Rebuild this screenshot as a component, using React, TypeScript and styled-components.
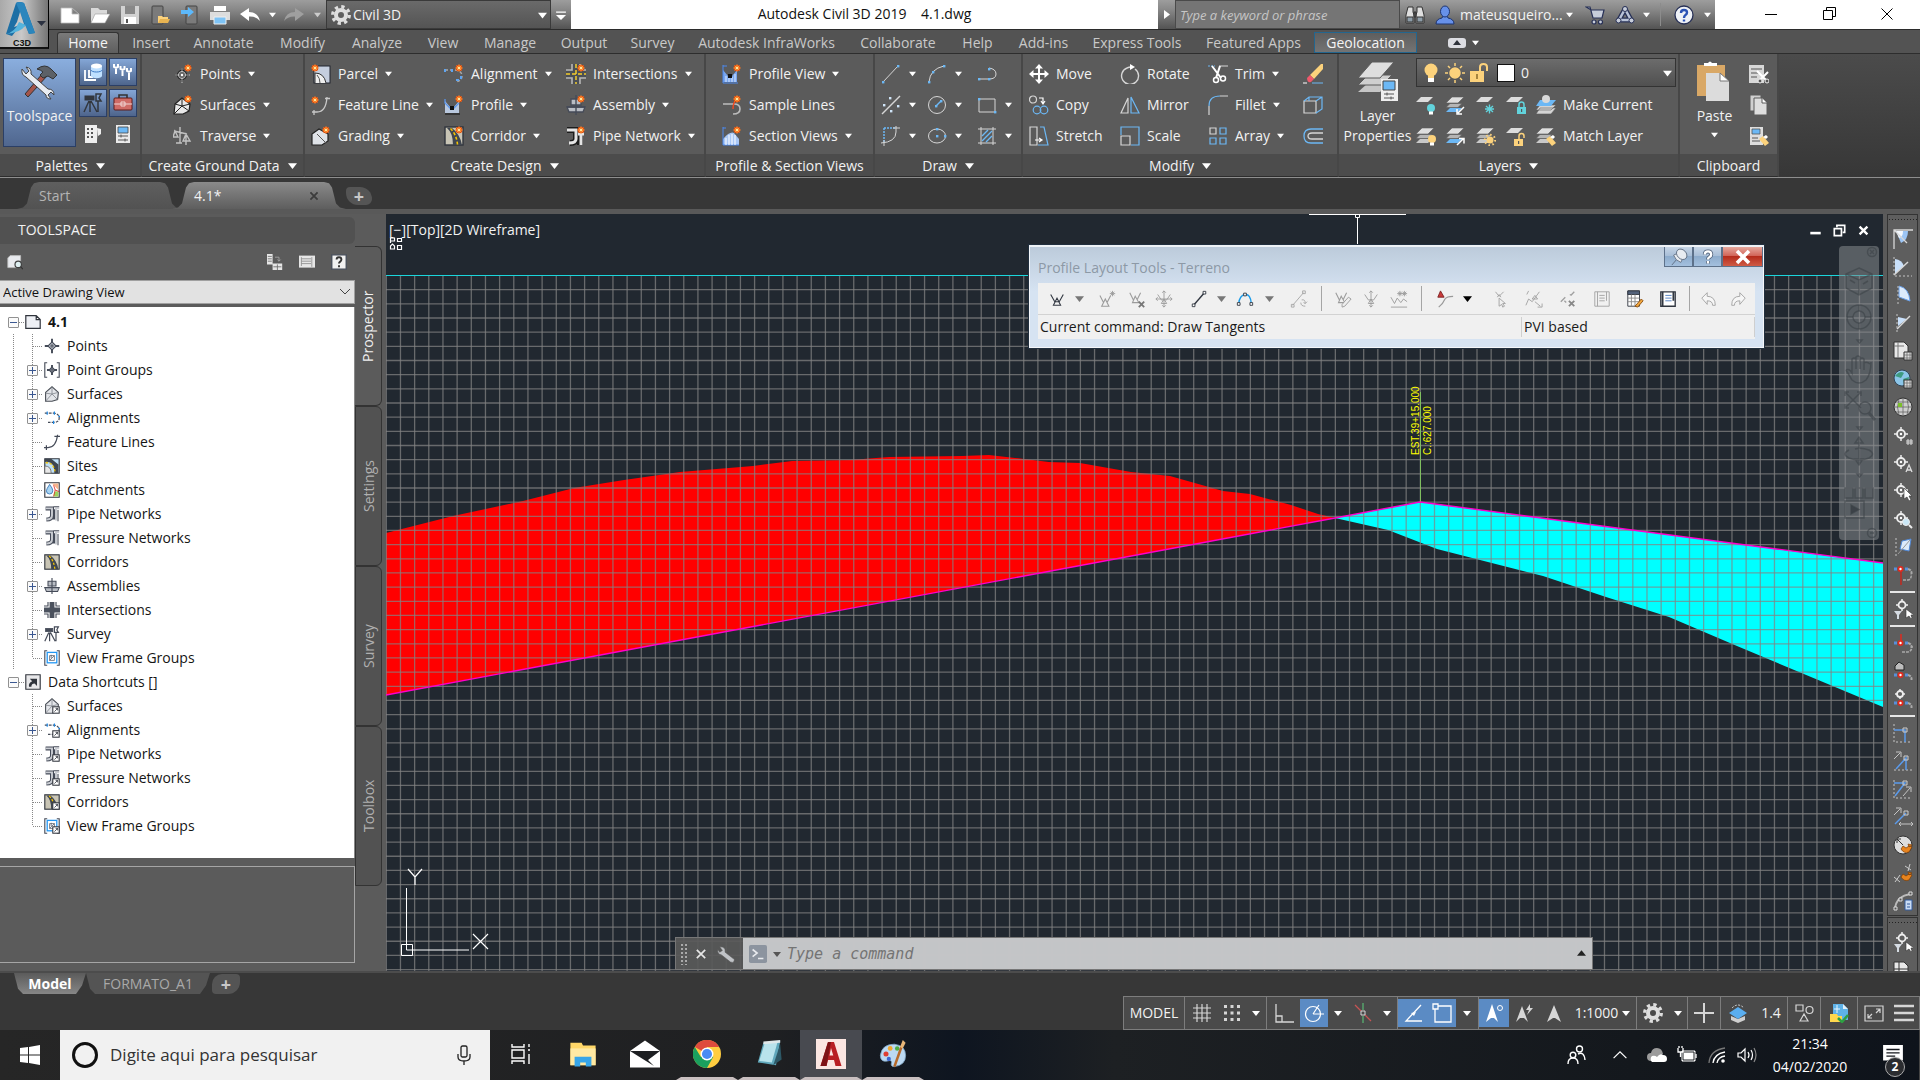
import React, { ReactNode } from "react";
import styled, { createGlobalStyle, css } from "styled-components";

const GlobalStyle = createGlobalStyle`
  *, *::before, *::after { box-sizing: border-box; }
  body { margin: 0; background: #373737; font-family: "Open Sans", "Noto Sans", sans-serif; font-size: 14px; }
  button, input, select { font: inherit; color: inherit; margin: 0; }
  button { padding: 0; border: 0; background: none; cursor: pointer; white-space: nowrap; }
  ul { list-style: none; margin: 0; padding: 0; }
  svg { display: block; flex: none; }
`;

/* ---------- icons ---------- */

const G = "#d6d6d6";
const B = "#6cb8f5";
const Y = "#fcd27c";

const spark = (x: number, y: number) => (
  <g>
    <circle cx={x} cy={y} r="3.3" fill="#e5480b" />
    <path
      d={`M${x - 3.5} ${y}H${x + 3.5}M${x} ${y - 3.5}V${y + 3.5}M${x - 2.3} ${y - 2.3}L${x + 2.3} ${y + 2.3}M${x - 2.3} ${y + 2.3}L${x + 2.3} ${y - 2.3}`}
      stroke="#ff9d3b"
      strokeWidth="1"
    />
    <circle cx={x} cy={y} r="1.3" fill="#ffe79a" />
  </g>
);
const dot = (x: number, y: number, c = B) => <rect x={x - 1} y={y - 1} width="2.4" height="2.4" fill={c} />;
const sheet = (y: number, c = "#dcdcdc") => <path d={`M5 ${y}H17L12 ${y + 5}H0Z`} fill={c} />;
const layers = (third = "#c9c9c9") => (
  <g>
    <path d="M4 13h12l-4 4H0z" fill={third} />
    <path d="M4 8.5h12l-4 4H0z" fill="#b5b5b5" stroke="#5b5b5b" strokeWidth=".6" />
    <path d="M6 2h12l-6 6H0z" fill="#dedede" stroke="#5b5b5b" strokeWidth=".6" />
  </g>
);
const bulb = (x: number, y: number, c: string) => (
  <g>
    <circle cx={x} cy={y} r="4" fill={c} />
    <rect x={x - 2} y={y + 3.5} width="4" height="3" fill="#fff" />
  </g>
);
const padlock = (x: number, y: number, c: string, open?: boolean) => (
  <g>
    <path
      d={open ? `M${x + 5} ${y}v-3a2.5 2.5 0 0 1 5 0v2` : `M${x + 2} ${y}v-2.5a2.5 2.5 0 0 1 5 0v2.5`}
      fill="none"
      stroke={c}
      strokeWidth="1.5"
    />
    <rect x={x} y={y} width="9" height="7" fill={c} />
    <rect x={x + 4} y={y + 2} width="1.2" height="3" fill="#555" />
  </g>
);
const target = (x: number, y: number, c: string) => (
  <g stroke={c} strokeWidth="1.5">
    <path d={`M${x} ${y - 7}V${y + 7}M${x - 7} ${y}H${x + 7}`} />
    <circle cx={x} cy={y} r="4" strokeWidth="1.8" fill="#666" />
    <circle cx={x} cy={y} r="1.2" fill="#fff" stroke="none" />
  </g>
);
const treeTarget = (r: number) => (
  <g stroke="#454b58" fill="#dfe3ea" strokeWidth="1.5">
    <path d={`M10 ${10 - r * 1.8}V${10 + r * 1.8}M${10 - r * 1.8} 10H${10 + r * 1.8}`} strokeWidth="2.4" />
    <path d={`M10 ${10 - r}L${10 + r} 10L10 ${10 + r}L${10 - r} 10Z`} />
    <circle cx="10" cy="10" r="1.4" fill="#fff" />
  </g>
);
const surf = (
  <g>
    <path d="M2 8 10 1l8 7-1 9-7 2H2z" fill="#e3e5e9" stroke="#4b5058" strokeWidth="1.4" />
    <path d="M10 1v9L2 19M10 10l7 7M2 9l8 1 8-2" stroke="#80858d" fill="none" />
  </g>
);
const pipes = (
  <g>
    <path d="M2 3h8v9q0 5-7 5M13 4v13" stroke="#454b58" strokeWidth="5" fill="none" />
    <path d="M2 3h8v9q0 5-7 5M13.5 3H19M15 4v14" stroke="#c9ccd2" strokeWidth="2.4" fill="none" />
    <path d="M17.5 5v14M12 1h7" stroke="#454b58" strokeWidth="1.3" />
  </g>
);
const road = (
  <g>
    <rect x="1" y="1" width="18" height="18" fill="#c9c5b5" stroke="#30343c" strokeWidth="1.4" />
    <path d="M3 2h5q8 6 10 17H9Q9 7 3 2z" fill="#3f4650" />
    <path d="M6.5 2.5q6 6 7 16" stroke="#f5c400" strokeWidth="1.6" strokeDasharray="3 2" fill="none" />
  </g>
);
const assembly = (
  <g>
    <path d="M5 4h10v6H5zM1 12h18l-2 5H3z" fill="#b9bdc4" stroke="#454b58" strokeWidth="1.3" />
    <path d="M10 0v20M1 12h18" stroke="#454b58" strokeWidth="1.4" />
  </g>
);
const tripod = (c: string) => (
  <g stroke={c} fill={c}>
    <rect x="2" y="3" width="9" height="4" />
    <path d="M13 1h5l-2 4 2 3h-5zM7 8v11M6 8 1 19M8 8l6 11M15 8v11" fill="none" strokeWidth="1.5" />
  </g>
);
const frames = (
  <g fill="none">
    <path d="M4 1H1v18h3M16 1h3v18h-3" stroke="#454b58" strokeWidth="1.4" />
    <rect x="4" y="3" width="12" height="13" stroke="#2196f3" strokeWidth="1.6" />
    <path d="M7 7h6v6H7zM7 13l6-6M9 6v4" stroke="#5b6270" />
  </g>
);
const shortcut = (
  <g>
    <rect x="11" y="11" width="8" height="8" fill="#fff" stroke="#30343c" strokeWidth="1.3" />
    <path d="M13 17l4-4M14.5 13H17v2.5" stroke="#30343c" fill="none" />
  </g>
);
const align = (
  <g fill="none">
    <path d="M1 4h12q6 1 6 6t-6 5.5H5" stroke="#454b58" strokeWidth="1.5" strokeDasharray="3.5 1.5" />
    <path d="M4 2v4M13 2v4M12 13.5v4M18 8h2" stroke="#1c87e5" strokeWidth="1.5" />
  </g>
);
const redNode = (y: number) => (
  <g>
    <path d={`M1 ${y}h3M12 ${y}h3`} stroke="#5790d9" strokeWidth="3" />
    <circle cx="7.5" cy={y} r="3" fill="#e02a1f" />
    <circle cx="7.5" cy={y} r="1.2" fill="#fff" />
    <path d={`M15 ${y}q4 1 3.5 5`} stroke="#a9a9a9" fill="none" strokeWidth="2" strokeDasharray="3 1" />
  </g>
);
const brush = (
  <path d="M8 14q3 5 8 3l3-5-3-1-3 2-3-2zM15 9l4 1-3 2z" fill="#e8841e" stroke="#7d3c05" strokeWidth=".7" />
);
const vee = (c: string) => (
  <g stroke={c} fill="none" strokeWidth="1.2">
    <path d="M3 5l5 9M17 5l-5 9M6 17l4-8 4 8zM7 13h6" />
  </g>
);
const smallVee = (c: string) => <path d="M1 6l4 8M13 6l-4 8M3 18l4-8 4 8z" stroke={c} fill="none" strokeWidth="1.2" />;
const burst = (x: number, y: number, c: string) => (
  <path
    d={`M${x - 3} ${y}h6M${x} ${y - 3}v6M${x - 2} ${y - 2}l4 4M${x + 2} ${y - 2}l-4 4`}
    stroke={c}
  />
);
const miniGrid = (
  <g>
    <path d="M11 11h8v8h-8z" fill="#ddd" stroke="#333" />
    <path d="M14 11v8M17 11v8M11 14h8M11 17h8" stroke="#666" strokeWidth=".7" />
  </g>
);

const ICONS: Record<string, ReactNode> = {
  newFile: <path d="M1 3h11l7 6v9H1z M12 3v6h7" fill="#fff" stroke="#bbb" strokeWidth=".8" />,
  open: (
    <g>
      <path d="M1 18V3h7l2 2h7v4H6z" fill="#d9d9d9" />
      <path d="M5 9h15l-5 9H1z" fill="#fff" stroke="#999" strokeWidth=".6" />
    </g>
  ),
  save: (
    <g>
      <path d="M1 1h18v18H1z" fill="#d2d2d2" />
      <path d="M5 1h10v8H5z" fill="#888" />
      <path d="M4 12h12v7H4z" fill="#fff" />
      <path d="M6 14h2v4H6z" fill="#555" />
    </g>
  ),
  openWeb: (
    <g>
      <rect x="2" y="1" width="11" height="18" rx="1" fill="#7b7b7b" stroke="#444" />
      <path d="M8 11h4l1 1h5v6H8z" fill={Y} />
      <path d="M10 14h10l-2 4H8z" fill="#e8b452" />
    </g>
  ),
  saveWeb: (
    <g>
      <rect x="6" y="1" width="11" height="18" rx="1" fill="#7b7b7b" stroke="#444" />
      <path d="M1 5h7V2l6 5-6 5V9H1z" fill="#5db9fb" />
    </g>
  ),
  print: (
    <g>
      <path d="M4 1h12v5H4z" fill="#fff" />
      <path d="M0 7h20v8H0z" fill="#ddd" />
      <path d="M4 12h12v7H4z" fill="#7ec3f5" stroke="#eee" />
    </g>
  ),
  undo: <path d="M0 9l9-6v4q9 0 11 9-4-5-11-4.5V16z" fill="#fff" />,
  redo: <path d="M20 9l-9-6v4Q2 7 0 16q4-5 11-4.5V16z" fill="#9f9f9f" />,
  gear: (
    <g>
      <circle cx="10" cy="10" r="8.3" fill="none" stroke="#dedede" strokeWidth="3.3" strokeDasharray="3.26 3.26" />
      <circle cx="10" cy="10" r="5" fill="none" stroke="#dedede" strokeWidth="4" />
    </g>
  ),
  customize: <path d="M3 6h14M5 11h10l-5 5z" stroke="#fff" fill="#fff" strokeWidth="1.8" />,
  binoc: (
    <g fill="#dfdfdf" stroke="#333" strokeWidth="1">
      <path d="M3 2h5v5l1 3v8H1v-8zM12 2h5l2 8v8h-8v-8l1-3z" />
      <path d="M2 12h6v5H2zM12 12h6v5h-6z" fill="#8e9da8" />
      <path d="M9 7h2v5H9z" fill="#555" />
    </g>
  ),
  user: (
    <g fill="#6791ea" stroke="#1d3471" strokeWidth="1">
      <path d="M1 19q0-5 6-6l1-2h4l1 2q6 1 6 6z" />
      <ellipse cx="10" cy="6.5" rx="4.5" ry="5.5" />
    </g>
  ),
  cart: (
    <g fill="none" stroke="#273056" strokeWidth="1.2">
      <path d="M1 2h4l3 11h9l2-8H6z" fill="#c7cdda" />
      <circle cx="9" cy="17" r="2" fill="#c7cdda" />
      <circle cx="15.5" cy="17" r="2" fill="#c7cdda" />
    </g>
  ),
  a360: (
    <g fill="none">
      <path d="M10 4 4 15h12z" stroke="#273056" strokeWidth="5" strokeLinejoin="round" />
      <path d="M10 4 4 15h12z" stroke="#b9c3d8" strokeWidth="2.5" strokeLinejoin="round" />
      <g fill="#c7cdda" stroke="#273056">
        <circle cx="10" cy="4" r="2.5" />
        <circle cx="3.5" cy="15.5" r="2.5" />
        <circle cx="16.5" cy="15.5" r="2.5" />
      </g>
    </g>
  ),
  help: (
    <g>
      <circle cx="10" cy="10" r="9" fill="#eef1f6" stroke="#273056" strokeWidth="1.3" />
      <path d="M7 8q0-3 3-3t3 2.5q0 1.5-1.5 2.5T10 13M10 14.5v2" stroke="#2a52b4" strokeWidth="2.4" fill="none" />
    </g>
  ),
  min: <path d="M4 10.5h12" stroke="#000" />,
  restore: <path d="M4.500 6.500h9v9h-9zM7.500 6V3.500h9v9H14" stroke="#000" fill="none" />,
  close: <path d="M4.500 4.500l11 11M15.500 4.500l-11 11" stroke="#000" />,

  tools: (
    <g>
      <path d="M5 31l3 3L27 13l-4-3z" fill="#a4554a" stroke="#333" />
      <path d="M17 6q8-6 14 0l6 6-4 4-5-3-5 2-3-3 3-3q-2-2-6-3z" fill="#5c6167" stroke="#333" />
      <path d="M2 6q-1 6 4 8l20 18q0 4 5 4l-3-4 3-3 3 3q0-6-6-6L11 11q1-6-5-7l3 4-3 3z" fill="#e9edf2" stroke="#444" />
    </g>
  ),
  prospector: (
    <g>
      <path d="M2 8v10h11M6 8v7h4" stroke="#fff" fill="none" strokeWidth="1.8" />
      <path d="M8 4v10a5 2 0 0 0 11 0V4" fill="#bfe0ff" />
      <ellipse cx="13.5" cy="4" rx="5.5" ry="2.5" fill="#fff" />
      <path d="M8 8a5.500 2 0 0 0 11 0" stroke="#3d7ac5" fill="none" />
    </g>
  ),
  settings: (
    <g stroke="#fff" strokeWidth="2" fill="none">
      <path d="M1 2v3l2 1 2-1V2M3 6v6M7.5 4v3l2 1 2-1V4M9.500 8v6M14 6v3l2 1 2-1V6M16 10v8" />
    </g>
  ),
  survey: tripod("#32373e"),
  toolbox: (
    <g>
      <path d="M6 5V2h8v3" stroke="#333" fill="none" strokeWidth="1.6" />
      <rect x="1" y="5" width="18" height="12" rx="1" fill="#cf6b66" stroke="#5d1b18" />
      <path d="M1 11h18M8 9h4v4H8z" stroke="#f0d6d4" fill="none" />
    </g>
  ),
  calc: (
    <g>
      <path d="M2 1h12v18H2zM14 4l4 1v5l-3 2v4" fill="#eee" />
      <path d="M4 5h2M8 5h2M4 9h2M8 9h2M4 13h2M8 13h2" stroke="#555" strokeWidth="2" />
    </g>
  ),
  props: (
    <g>
      <path d="M3 1h14v18H3z" fill="#eaeaea" />
      <path d="M5 3h10v6H5z" fill={B} stroke="#444" strokeWidth=".8" />
      <path d="M5 12h10M5 16h10M8 10.500v3M12 14.500v3" stroke="#555" />
    </g>
  ),
  points: (
    <g>
      {target(9, 11, "#111")}
      <path d="M9 4v3M9 15v4M2 11h3M13 11h4" stroke="#ddd" strokeWidth=".8" />
      <circle cx="9" cy="11" r="3.600" fill="none" stroke="#ddd" strokeWidth=".9" />
      {spark(15, 4)}
    </g>
  ),
  surfaces: (
    <g>
      <path d="M2 9 9 3l8 6-1 7-6 3H1z" fill="#e8e8e8" stroke="#222" strokeWidth="1.2" />
      <path d="M9 3v8l-8 8M9 11l7 5M2 9l7 2 8-2" stroke="#222" fill="none" />
      {spark(15, 4)}
    </g>
  ),
  traverse: (
    <path d="M7 1v16M3 17h6M1 5l13 3M2 5l-2 6h5zM13 8l-3 7h7zM13 8v11" stroke="#c2c2c2" fill="none" strokeWidth="1.4" />
  ),
  parcel: (
    <g>
      <rect x="3" y="2" width="16" height="17" fill="#c5cede" stroke="#20252e" />
      <path d="M4 19V9q9 0 11 10" fill="#eee" stroke="#333" />
      <path d="M9 19q0-5-3-8" stroke="#555" fill="none" />
      {spark(4, 4)}
    </g>
  ),
  feature: (
    <g>
      <path d="M1 17h5q9 0 10-15M14 3.500h5M3 15v5" stroke="#c9c9c9" fill="none" strokeWidth="1.3" />
      {spark(4, 5)}
    </g>
  ),
  grading: (
    <g>
      <path d="M1 8l7-5 9 5v7l-6 4H1z" fill="#dfe3e8" stroke="#222" strokeWidth="1.2" />
      <path d="M6 8l9 9" stroke="#555" />
      {spark(15, 4)}
    </g>
  ),
  alignment: (
    <g fill="none">
      <path d="M1 6h10q7 1 7 6t-7 6" stroke="#a9a9a9" strokeWidth="1.5" strokeDasharray="3 2" />
      <path d="M1 5v3M8 5v3M12 16h3M17 12v3" stroke="#5fa4ef" strokeWidth="2" />
      {spark(15, 4)}
    </g>
  ),
  profile: (
    <g>
      <path d="M1 6l5 6h4l5-6v12H1z" fill="#b9c8de" />
      <path d="M1 4v4l5 5h4l5-5" stroke="#5b95ea" fill="none" strokeWidth="1.3" />
      <rect x="6" y="11" width="4" height="4" fill="#111" />
      <path d="M1 19h15" stroke="#111" />
      {spark(15, 4)}
    </g>
  ),
  corridor: (
    <g>
      {road}
      {spark(15, 4)}
    </g>
  ),
  intersections: (
    <g>
      <path d="M7 0h6v20H7zM0 7h20v6H0z" fill="#4b4f55" />
      <path d="M6 0v6H0M14 0v6h6M6 20v-6H0M14 20v-6h6" stroke="#b6b6b6" fill="none" strokeWidth="1.6" />
      <path d="M0 10h20M10 0v20" stroke="#f5cd2a" strokeWidth="1.5" strokeDasharray="4 2" />
      {spark(15, 4)}
    </g>
  ),
  assembly: (
    <g>
      {assembly}
      {spark(15, 4)}
    </g>
  ),
  pipe: (
    <g>
      <path d="M1 4h9v9q0 4-6 4M14 7v12" stroke="#1c1c1c" strokeWidth="6" fill="none" />
      <path d="M1 4h9v9q0 4-7 4M15 7v12M12 8h6" stroke="#e4e4e4" strokeWidth="3" fill="none" />
      {spark(15, 4)}
    </g>
  ),
  profileView: (
    <g>
      <path d="M1 6l5 6h4l5-6v12H1z" fill="#78a5ee" />
      <path d="M1 1v18h15M1 2h4" stroke="#4c8af0" fill="none" />
      <path d="M4 12v6M7 13v5M10 13v5M13 10v8" stroke="#dcebff" />
      <rect x="6" y="10" width="4" height="4" fill="#111" />
      {spark(15, 4)}
    </g>
  ),
  sampleLines: (
    <g fill="none">
      <path d="M1 9h11q6 0 6 5t-7 5M1 9h5" stroke="#bdbdbd" strokeWidth="1.6" />
      <path d="M11 14q0-6 3-9" stroke="#ed4a22" strokeWidth="1.5" />
      {spark(15, 4)}
    </g>
  ),
  sectionViews: (
    <g>
      <path d="M1 19v-6q7-8 11-6l5 6v6z" fill="#a9c7f5" />
      <path d="M1 1v18h16M1 2h3" stroke="#4c8af0" fill="none" />
      <path d="M4 12v7M7 9v10M10 8v11M13 9v10" stroke="#fff" />
      {spark(15, 4)}
    </g>
  ),
  line: (
    <g>
      <path d="M2 18 17 2" stroke={G} />
      {dot(2, 18)}
      {dot(17, 2)}
    </g>
  ),
  arc: (
    <g>
      <path d="M2 18Q3 5 17 2" stroke={G} fill="none" />
      {dot(2, 18)}
      {dot(17, 2)}
      {dot(6, 8)}
    </g>
  ),
  pline: (
    <g>
      <path d="M2 15h10M12 4q7 1 7 6t-7 5" stroke={G} fill="none" />
      {dot(2, 15)}
      {dot(12, 15)}
      {dot(12, 5)}
    </g>
  ),
  points2: (
    <g>
      <path d="M1 19 19 1" stroke={G} strokeWidth="1.4" />
      {dot(3, 10, "#cfe4f7")}
      {dot(9, 3, "#cfe4f7")}
      {dot(10, 16, "#cfe4f7")}
      {dot(17, 11, "#cfe4f7")}
    </g>
  ),
  circle: (
    <g>
      <circle cx="10" cy="10" r="8.5" stroke={G} fill="none" />
      <path d="M9 11l5-5" stroke={B} strokeWidth="1.5" />
      {dot(9, 11)}
      {dot(14, 6)}
    </g>
  ),
  rect: (
    <g>
      <path d="M2 4h16v13H2z" stroke={G} fill="none" />
      {dot(2, 4)}
      {dot(18, 17)}
    </g>
  ),
  curve: (
    <g fill="none">
      <path d="M3 2v14M3 2h12" stroke={B} strokeDasharray="2 1" strokeWidth="1.5" />
      <path d="M15 0v6q0 10-15 11M12 2h7M3 14v6" stroke={G} />
    </g>
  ),
  ellipse: (
    <g>
      <ellipse cx="10" cy="10" rx="8.5" ry="7" stroke={G} fill="none" />
      {dot(10, 10)}
      {dot(10, 3)}
      {dot(18, 10)}
    </g>
  ),
  hatch: (
    <g>
      <path d="M4 1v18M16 1v18M1 3h18M1 17h18" stroke={G} />
      <path d="M5 10l6-6M5 15 15 5M9 16l6-6" stroke={B} strokeWidth="1.4" />
    </g>
  ),
  move: (
    <path
      d="M10 0l4 4.500h-3V9h4.500V6L20 10l-4.500 4v-3H11v4.500h3L10 20l-4-4.500h3V11H4.500v3L0 10l4.500-4v3H9V4.500H6z"
      fill="#fff"
    />
  ),
  copy: (
    <g fill="none" strokeWidth="1.2">
      <circle cx="4" cy="4.5" r="3.5" stroke={G} />
      <path d="M10 3h4v5M12 6l2 3 2-3" stroke="#fff" />
      <circle cx="8" cy="15" r="3.8" stroke={B} />
      <circle cx="15" cy="15" r="3.8" stroke={B} />
    </g>
  ),
  stretch: (
    <g fill="none" strokeWidth="1.2">
      <path d="M1 1h7v18H1z" stroke={G} />
      <path d="M11 1h4l4 18H9" stroke={B} />
      <path d="M6 14h6M10 12l3 2-3 2" stroke="#fff" />
    </g>
  ),
  rotate: (
    <g>
      <path d="M15 5A8.500 8.500 0 1 1 7 4q2-1 4-1" stroke={G} fill="none" strokeWidth="1.4" />
      <path d="M10 0l5 3-5 3z" fill="#fff" />
    </g>
  ),
  mirror: (
    <g fill="none" strokeWidth="1.2">
      <path d="M8 3v15H1z" stroke={G} />
      <path d="M11 2v16h8z" stroke={B} />
    </g>
  ),
  scale: (
    <g fill="none" strokeWidth="1.2">
      <path d="M1 9V1h18v18h-8" stroke={B} />
      <path d="M1 10h9v9H1z" stroke={G} />
    </g>
  ),
  trim: (
    <g>
      <path d="M0 2h7" stroke={B} strokeDasharray="2 1" />
      <path d="M11 2h9" stroke={G} />
      <path d="M4 2l9 12M12 2 8 14" stroke="#fff" strokeWidth="2" />
      <circle cx="8" cy="16" r="2.5" stroke="#fff" fill="none" strokeWidth="1.5" />
      <circle cx="15" cy="14.5" r="2.5" stroke="#fff" fill="none" strokeWidth="1.5" />
    </g>
  ),
  fillet: (
    <g fill="none" strokeWidth="1.2">
      <path d="M1 20V11M12 1h8" stroke={G} />
      <path d="M1 11Q1 1 12 1" stroke={B} />
    </g>
  ),
  array: (
    <g fill="none" strokeWidth="1.2">
      <path d="M2 2h6v6H2z" stroke={G} />
      <path d="M12 2h6v6h-6zM2 12h6v6H2zM12 12h6v6h-6z" stroke={B} />
    </g>
  ),
  erase: (
    <g>
      <path d="M7 11 18 0h2v5L11 15z" fill={Y} />
      <path d="M4 14l3-3 4 4-3 3q-4 1-4-4z" fill="#f0596c" />
      <path d="M0 19h4" stroke="#fff" />
      <path d="M9 19h11" stroke={B} />
    </g>
  ),
  box: (
    <g fill="none" strokeWidth="1.2">
      <path d="M1 6h12v12H1z" stroke={G} />
      <path d="M1 6l5-4h13v12l-6 4M13 6l6-4M6 2v4" stroke={B} />
    </g>
  ),
  offset: (
    <g fill="none" strokeWidth="1.3">
      <path d="M20 3H8Q1 3 1 10t7 7h12" stroke={B} />
      <path d="M20 7H9q-4 0-4 3t4 3h11" stroke={G} />
    </g>
  ),
  layerProps: (
    <g>
      <path d="M10 22h22L22 31H0z" fill="#c6c6c6" />
      <path d="M10 14h24L24 24H0z" fill="#cfcfcf" stroke="#5b5b5b" />
      <path d="M14 1h22L22 17H0z" fill="#dedede" stroke="#5b5b5b" />
      <path d="M23 18h17v22H23z" fill="#eee" />
      <path d="M25 20h12v9H25z" fill={B} stroke="#444" />
      <path d="M26 33h10M26 37h10M29 31.500v3M33 35.500v3" stroke="#555" />
    </g>
  ),
  bulb: (
    <g>
      <circle cx="10" cy="7" r="6.5" fill={Y} />
      <path d="M7 12h6v3H7z" fill={Y} />
      <path d="M7 15h6v4H7z" fill="#fff" />
    </g>
  ),
  sun: (
    <g stroke={Y} strokeWidth="1.5">
      <circle cx="10" cy="10" r="5" fill={Y} />
      <path d="M10 0v3M10 17v3M0 10h3M17 10h3M3 3l2 2M15 15l2 2M17 3l-2 2M3 17l2-2" />
    </g>
  ),
  unlock: (
    <g>
      <path d="M11 9V4q0-3 3.500-3T18 4v4" stroke={Y} fill="none" strokeWidth="2" />
      <path d="M1 8h14v11H1z" fill={Y} />
      <path d="M8 11v5" stroke="#8a6a2a" strokeWidth="1.5" />
    </g>
  ),
  lOff: (
    <g>
      {sheet(2)}
      {bulb(15, 13, "#62d3dc")}
    </g>
  ),
  lIso: (
    <g>
      {layers(B)}
      <path d="M18 12l-6 6M11 14v5h5" stroke="#fff" fill="none" strokeWidth="1.5" />
    </g>
  ),
  lFreeze: (
    <g>
      {sheet(2)}
      <path d="M9 14h9M13.500 9.500v9M10 11l7 6M17 11l-7 6" stroke="#62d3dc" strokeWidth="1.4" />
    </g>
  ),
  lLock: (
    <g>
      {sheet(2)}
      {padlock(11, 12, "#62d3dc")}
    </g>
  ),
  lCurrent: (
    <g>
      <path d="M4 13h16l-5 6H0zM4 10h16l-5 5H0z" fill="#d4d4d4" stroke="#5b5b5b" strokeWidth=".6" />
      <path d="M4 5h16l-5 6H0z" fill={B} />
      <circle cx="10" cy="4" r="4" fill="#d9d9d9" />
    </g>
  ),
  lOn: (
    <g>
      {layers()}
      {bulb(16, 13, Y)}
    </g>
  ),
  lUniso: (
    <g>
      {layers(B)}
      <path d="M11 19l6-6M13 12.500h5v5" stroke="#fff" fill="none" strokeWidth="1.5" />
    </g>
  ),
  lThaw: (
    <g>
      {layers()}
      <circle cx="14" cy="14" r="3.5" fill={Y} />
      <circle cx="14" cy="14" r="5.2" stroke={Y} fill="none" strokeDasharray="1.5 2.5" strokeWidth="2" />
    </g>
  ),
  lUnlock: (
    <g>
      {sheet(2)}
      {padlock(8, 13, Y, true)}
    </g>
  ),
  lMatch: (
    <g>
      {layers()}
      <path d="M10 13l4-3 6 7-4 3z" fill={Y} />
      <path d="M14 11l3-2 2 2-2 2z" fill="#fff" />
    </g>
  ),
  paste: (
    <g>
      <path d="M2 4h28v31H2z" fill="#d9a866" />
      <path d="M9 5V2h4q2-3 4 0h5v3z" fill="#fff" />
      <path d="M11 12h14l9 8v20H11z" fill="#dcdcdc" />
      <path d="M25 12v8h9z" fill="#fff" stroke="#777" />
    </g>
  ),
  cut: (
    <g>
      <path d="M0 1h15v18H0z" fill="#d8d8d8" />
      <path d="M2 5h11M2 9h8M2 13h6" stroke="#555" />
      <path d="M8 7l9 9M19 8l-8 8" stroke="#fff" strokeWidth="2" />
      <circle cx="11" cy="17" r="2" stroke="#eee" fill="#555" />
      <circle cx="18" cy="17" r="2" stroke="#eee" fill="#555" />
    </g>
  ),
  copyClip: (
    <g stroke="#5b5b5b">
      <path d="M1 0h11v16H1z" fill="#d0d0d0" />
      <path d="M5 3h8l5 5v12H5z" fill="#dedede" />
      <path d="M13 3v5h5" fill="#fff" />
    </g>
  ),
  pasteSpec: (
    <g>
      <path d="M1 1h13v18H1z" fill="#dedede" />
      <path d="M3 3h8v5H3z" fill={B} stroke="#555" strokeWidth=".8" />
      <path d="M3 12h6M3 15h8" stroke="#555" />
      <path d="M10 13l4-3 6 7-4 3z" fill={Y} />
      <path d="M14 11l3-2 2 2-2 2z" fill="#fff" />
    </g>
  ),

  find: (
    <g>
      <path d="M1 5l3-3h13v12l-3 3H1z" fill="#e8eaee" stroke="#bbb" />
      <circle cx="14" cy="13" r="4" fill="#ddeef0" stroke="#3f3f3f" strokeWidth="1.5" />
      <path d="M17 16l3 3" stroke="#333" strokeWidth="1.5" />
    </g>
  ),
  hierarchy: (
    <g>
      <path d="M0 0h7v13H0zM7 12h12v8H7z" fill="#e6e6e6" />
      <path d="M1 3h5M1 6h5M1 9h5M8 16h10M13 13v7" stroke="#666" />
      <path d="M10 4h5v5M13 7l2 2 2-2" stroke="#aaa" fill="none" />
    </g>
  ),
  table: (
    <g>
      <path d="M0 2h20v15H0z" fill="#e6e6e6" />
      <path d="M3 6h12M3 9h12M3 12h12M3 4v11M16 4v12" stroke="#888" />
    </g>
  ),
  question: (
    <g>
      <path d="M1 1h18v18H1z" fill="#f1f1f1" stroke="#444b57" strokeWidth="1.6" />
      <path d="M7 7q0-3 3-3t3 3q0 1.500-1.500 2.500T10 12M10 14v2.500" stroke="#333" strokeWidth="2.4" fill="none" />
    </g>
  ),

  tDwg: <path d="M1 2h13l5 5v11H1zM14 2v5h5" fill="#eef0f5" stroke="#30343c" strokeWidth="1.5" />,
  tShort: (
    <g>
      <path d="M1 1h18v18H1z" fill="#e8e8ea" stroke="#30343c" strokeWidth="1.4" />
      <path d="M5 16q-1-5 4-7L6 6h9v9l-3-3q-4 0-4 4z" fill="#30343c" />
    </g>
  ),
  tPoints: treeTarget(5),
  tPointGroups: (
    <g>
      {treeTarget(3.5)}
      <path d="M4 1H1v18h3M16 1h3v18h-3" stroke="#454b58" fill="none" strokeWidth="1.4" />
    </g>
  ),
  tSurf: surf,
  tAlign: align,
  tFeature: <path d="M0 17h5q10 0 12-16M13 3h7M3 14v6" stroke="#454b58" fill="none" strokeWidth="1.5" />,
  tSites: (
    <g>
      <path d="M1 1h18v18H1z" fill="#bfe0f7" stroke="#30343c" strokeWidth="1.4" />
      <path d="M1 5q12-2 12 14h5V8L9 1H1z" fill="#3f4650" />
      <path d="M1 10q8 0 8 9H1z" fill="#e8e8e8" stroke="#666" />
      <path d="M2 6q10-1 12 12" stroke="#f5c400" strokeWidth="1.6" strokeDasharray="3 2" fill="none" />
    </g>
  ),
  tCatch: (
    <g>
      <path d="M1 1h18v18H1z" fill="#fff" stroke="#30343c" strokeWidth="1.4" />
      <path d="M10 2h8v8z" fill="#f6b48c" />
      <path d="M12 18q0-8 6-6v6z" fill="#9ed45c" />
      <path d="M7 3q-4 6-4 8a4 4 0 0 0 8 0q0-3-4-8z" fill="#a8d4f2" stroke="#2a6bb0" />
      <path d="M12 4l2 6-2 8M14 10l5 2" stroke="#d22" fill="none" />
    </g>
  ),
  tPipe: pipes,
  tRoad: road,
  tAssembly: assembly,
  tInter: (
    <g>
      <path d="M7 0h6v7h7v6h-7v7H7v-7H0V7h7z" fill="#4b525e" />
      <path d="M5 0v5H0M15 0v5h5M5 20v-5H0M15 20v-5h5" stroke="#454b58" fill="none" strokeWidth="1.4" />
    </g>
  ),
  tSurvey: tripod("#454b58"),
  tFrames: frames,
  tSurfS: (
    <g>
      {surf}
      {shortcut}
    </g>
  ),
  tAlignS: (
    <g>
      {align}
      {shortcut}
    </g>
  ),
  tPipeS: (
    <g>
      {pipes}
      {shortcut}
    </g>
  ),
  tRoadS: (
    <g>
      {road}
      {shortcut}
    </g>
  ),
  tFramesS: (
    <g>
      {frames}
      {shortcut}
    </g>
  ),

  r1: (
    <g>
      <path d="M3 2h12q0 9-7 12z" fill="#9cc5f5" />
      <path d="M3 2h7q0 6-4 7z" fill="#f3f8fe" />
      <path d="M1 20V1h19M1 1l13 13" stroke="#d8d8d8" fill="none" strokeWidth="1.3" />
    </g>
  ),
  r2: (
    <g>
      <path d="M2 2q7 1 9 7L2 17z" fill="#c9e0fa" />
      <path d="M1 18 15 5" stroke="#d8d8d8" strokeWidth="1.5" />
      <path d="M1 0v19h18" stroke="#c4c4c4" strokeDasharray="2 2" fill="none" />
    </g>
  ),
  r3: (
    <g>
      <path d="M6 1q10 2 11 15L6 12z" fill="#dcebfc" stroke="#6aa1ea" />
      <path d="M5 1v18" stroke="#c4c4c4" strokeDasharray="2 2" />
    </g>
  ),
  r4: (
    <g>
      <path d="M5 4l9 2-9 7z" fill="#c9e0fa" />
      <path d="M4 16 17 3" stroke="#d8d8d8" strokeWidth="1.5" />
      <path d="M4 1v19" stroke="#c4c4c4" strokeDasharray="2 2" />
    </g>
  ),
  r5: (
    <g>
      <path d="M1 1h10l4 4v12H1z" fill="#e8e8e8" stroke="#333" />
      <path d="M5 1v16M1 5h10" stroke="#777" />
      {miniGrid}
    </g>
  ),
  r6: (
    <g>
      <circle cx="9" cy="9" r="8" fill="#8cc5e8" stroke="#345" />
      <path d="M2 7q5-6 9-3l-3 5q-3-1-6-2zM10 10l6-2q0 6-5 7z" fill="#3f9b80" />
      {miniGrid}
    </g>
  ),
  r7: (
    <g fill="none">
      <circle cx="10" cy="10" r="9" fill="#cfcfcf" stroke="#333" />
      <path d="M1 10h18M10 1v18M3 5h14M3 15h14M6 2q-3 8 0 16M14 2q3 8 0 16" stroke="#666" strokeWidth=".8" />
      <path d="M5 6h4v4H5z" fill="#7bbf2a" />
    </g>
  ),
  r8: (
    <g>
      {target(8, 9, "#eee")}
      <path d="M13 16h7M13 18h7M15 14v6M18 14v6" stroke="#ddd" />
    </g>
  ),
  r9: (
    <g>
      {target(8, 9, "#eee")}
      <path d="M13 19l3-7 3 7M14 17h4" stroke="#ddd" fill="none" strokeWidth="1.3" />
    </g>
  ),
  r10: (
    <g>
      {target(8, 9, "#eee")}
      <path d="M11 7v11l3-2 2 4 2-1-2-4h3z" fill="#fff" stroke="#333" strokeWidth=".6" />
    </g>
  ),
  r11: (
    <g>
      {target(8, 9, "#eee")}
      <circle cx="13" cy="13" r="3.5" fill="#c9e6f5" stroke="#eee" />
      <path d="M16 16l3 3" stroke="#eee" strokeWidth="2" />
    </g>
  ),
  r12: (
    <g>
      <path d="M3 1v18" stroke="#c4c4c4" strokeDasharray="2 2" />
      <path d="M9 4l9-2-2 12-9-2z" fill="#dceafa" stroke="#4f87d6" />
      <path d="M5 17 17 3" stroke="#999" />
    </g>
  ),
  r13: (
    <g>
      <path d="M8 5v15" stroke="#c5281f" strokeWidth="1.5" />
      {redNode(4)}
      <path d="M10 15h5q4-1 3-6" stroke="#a9a9a9" fill="none" strokeWidth="1.5" strokeDasharray="3 1" />
    </g>
  ),
  r14: (
    <g>
      <circle cx="9" cy="6" r="3.5" fill="none" stroke="#eee" strokeWidth="1.8" />
      <path d="M9 0v3M9 9v3M3 6h3M12 6h3" stroke="#eee" strokeWidth="1.5" />
      <path d="M1 12h8l-3 4v4H4v-4z" fill="#d5dbe2" />
      <path d="M13 10v9l3-2 2 3 1-1-1-3h3z" fill="#fff" stroke="#333" strokeWidth=".6" />
    </g>
  ),
  r15: (
    <g>
      <path d="M8 1v8" stroke="#e02a1f" strokeWidth="1.5" />
      {redNode(10)}
      <path d="M9 19h6q4-1 4-6" stroke="#a9a9a9" fill="none" strokeWidth="1.5" strokeDasharray="3 1" />
    </g>
  ),
  r16: (
    <g>
      <path d="M2 9V5l4-4 5 3v5z" fill="#bdbdbd" stroke="#222" />
      {redNode(14)}
    </g>
  ),
  r17: (
    <g>
      <circle cx="7" cy="5" r="3" fill="none" stroke="#eee" strokeWidth="1.8" />
      <path d="M7 0v2M7 8v2M2 5h2M10 5h2" stroke="#eee" strokeWidth="1.5" />
      {redNode(14)}
    </g>
  ),
  r18: (
    <g fill="none">
      <path d="M1 1v18h18" stroke="#c4c4c4" strokeDasharray="2 2" />
      <path d="M1 7h11v12" stroke="#5a9aec" strokeWidth="1.5" />
      <path d="M10 5h4v4h-4z" stroke="#ccc" />
    </g>
  ),
  r19: (
    <g fill="none">
      <path d="M1 8l6-6M3 1h5v5" stroke="#c4c4c4" />
      <path d="M1 19h18" stroke="#c4c4c4" strokeDasharray="2 2" />
      <path d="M3 18 13 7v12" stroke="#5a9aec" strokeWidth="1.5" />
      <path d="M11 5h4v4h-4z" stroke="#ccc" />
    </g>
  ),
  r20: (
    <g fill="none">
      <path d="M1 1v18h18" stroke="#c4c4c4" strokeDasharray="2 2" />
      <path d="M10 17l7-8M13 8h5v5" stroke="#c4c4c4" />
      <path d="M1 4h11L2 17" stroke="#5a9aec" strokeWidth="1.5" />
      <path d="M10 2h4v4h-4z" stroke="#ccc" />
    </g>
  ),
  r21: (
    <g fill="none">
      <path d="M1 8l6-6M3 1h5v5M6 17h14M8 15l-2 2 2 2M18 15l2 2-2 2" stroke="#c4c4c4" />
      <path d="M2 17 13 6" stroke="#5a9aec" strokeWidth="1.5" />
      <path d="M11 4h4v4h-4z" stroke="#ccc" />
    </g>
  ),
  r22: (
    <g>
      <circle cx="10" cy="10" r="9" fill="#dedede" stroke="#333" />
      <path d="M10 10 4 4M4 8V4h4" stroke="#333" fill="none" />
      {brush}
    </g>
  ),
  r23: (
    <g>
      <path d="M1 14l6 5M2 19l5-7M12 3l6 4M17 1l-2 7" stroke="#ccc" />
      {brush}
    </g>
  ),
  r24: (
    <g fill="none">
      <path d="M2 18Q3 5 18 3" stroke="#bbb" strokeWidth="1.8" />
      <path d="M1 16h3v3H1zM6 7h3v3H6zM16 1h3v3h-3z" fill="#555" stroke="#ddd" />
      <path d="M12 9h7v10h-7z" fill="#c9dcf5" stroke="#335a9c" />
      <path d="M14 13h3M14 16h3" stroke="#335a9c" />
    </g>
  ),
  r25: <path d="M1 2h10l4 4v13H1zM1 9h14M6 2v12" fill="#e8e8e8" stroke="#333" />,

  vTan: vee("#303640"),
  vAdd: (
    <g>
      {smallVee("#9b9b9b")}
      {burst(15, 4, "#9b9b9b")}
    </g>
  ),
  vDel: (
    <g>
      <path d="M2 3l4 8M14 3l-4 8M5 14l3-7 4 7z" stroke="#9b9b9b" fill="none" strokeWidth="1.2" />
      <path d="M12 13l6 6M18 13l-6 6" stroke="#777" strokeWidth="2" />
    </g>
  ),
  vMove: (
    <path
      d="M3 5l4 6h6l4-6M10 1v18M1 10h18M7 15l3-5 3 5zM8 3l2-2 2 2M8 17l2 2 2-2M3 8l-2 2 2 2M17 8l2 2-2 2"
      stroke="#9b9b9b"
      fill="none"
    />
  ),
  vLine: (
    <g fill="#fff" stroke="#303640">
      <path d="M4 17 16 3" strokeWidth="1.5" />
      <path d="M2.500 15.500h3v3h-3zM14.500 1.500h3v3h-3z" />
    </g>
  ),
  vCurve: (
    <g fill="none">
      <path d="M3 15Q4 6 10 5t7 10" stroke="#1b9be8" strokeWidth="1.6" />
      <path d="M1.500 14h3v3h-3zM8.500 3.500h3v3h-3zM15.500 14h3v3h-3z" fill="#fff" stroke="#303640" />
    </g>
  ),
  vConv: (
    <path
      d="M3 17 15 3M1.500 16h3v3h-3zM14 1h3v3h-3zM13 11q4-1 4 4l-2-1M17 15l2-2M12 14q0 4 5 4"
      stroke="#a5a5a5"
      fill="none"
    />
  ),
  vEdit: (
    <g fill="none" stroke="#9b9b9b">
      <path d="M2 3l4 8M14 3l-4 8M5 14l3-7 4 7z" strokeWidth="1.2" />
      <path d="M9 16l7-8 3 2-7 8-3 1z" fill="#eee" />
    </g>
  ),
  vLift: (
    <path d="M3 5l4 6h6l4-6M10 1v18M7 15l3-5 3 5zM8 3l2-2 2 2M8 17l2 2 2-2" stroke="#9b9b9b" fill="none" />
  ),
  vSet: (
    <g>
      <path d="M1 8l4 7 3-6 4 5 3-4 4 3M1 19h18" stroke="#9b9b9b" fill="none" />
      {burst(11, 4, "#9b9b9b")}
      {burst(16, 4, "#9b9b9b")}
    </g>
  ),
  vWarn: (
    <g>
      <path d="M2 8 5 1l4 7z" fill="#c93a3a" stroke="#7c2323" />
      <path d="M3 19q5-4 7-9 2-3 9-3" stroke="#999" fill="none" strokeWidth="1.3" />
    </g>
  ),
  vPick: (
    <g fill="none" stroke="#a0a0a0">
      <path d="M5 2l4 5 5-5M7 8l2-3 2 3M9 9v9l3-2 1 3 2-1-2-3h3z" />
    </g>
  ),
  vSub: <path d="M1 17l3-7 4 3 8-11M4 1l-2 4M8 10l3-4 3 4zM11 13l6 5M14 19h5v-4" stroke="#a0a0a0" fill="none" />,
  vErase: (
    <g stroke="#a0a0a0">
      <path d="M2 13l5-5M13 6l4-4M6 12l2 2M12 5l2 1" strokeWidth="1.5" />
      <path d="M11 12l6 6M17 12l-6 6" stroke="#888" strokeWidth="2" />
    </g>
  ),
  vList: (
    <g fill="none" stroke="#a0a0a0">
      <path d="M2 2h16v16H2zM5 2v16M15 2v10M7 6h6M7 9h6M7 12h6" />
    </g>
  ),
  vGrid: (
    <g fill="none" stroke="#303640">
      <path d="M2 1h13v17H2z" fill="#fff" />
      <path d="M2 1h13v4H2z" fill="#53627a" />
      <path d="M2 9h13M2 13h13M6 5v13M10 5v13" stroke="#888" />
      <path d="M10 18l7-8 2 2-6 7z" fill="#f0a63c" stroke="#8a4d10" />
    </g>
  ),
  vPanel: (
    <g fill="none" stroke="#303640">
      <path d="M2 2h16v16H2z" fill="#fff" strokeWidth="1.5" />
      <path d="M7 6h7M7 9h7M7 12h7" stroke="#4b7bc0" />
      <path d="M4 2v16M16 2v10" strokeWidth="2" />
    </g>
  ),
  vUndo: <path d="M2 9l6-6v4q9 0 9 10h-3q0-5-6-5v4z" stroke="#a0a0a0" fill="#f6f6f6" />,
  vRedo: <path d="M18 9l-6-6v4q-9 0-9 10h3q0-5 6-5v4z" stroke="#a0a0a0" fill="#f6f6f6" />,

  sGrid: <path d="M5 1v18M10 1v18M15 1v18M1 5h18M1 10h18M1 15h18" stroke={G} strokeWidth="1.2" />,
  sSnap: (
    <g fill={G}>
      {[2, 8.5, 15].map((y) => [2, 8.5, 15].map((x) => <rect key={`${x}-${y}`} x={x} y={y} width="3" height="3" />))}
    </g>
  ),
  sOrtho: <path d="M2 1v18h18M2 13h6v6" stroke={G} fill="none" strokeWidth="1.3" />,
  sPolar: (
    <g fill="none" stroke="#fff" strokeWidth="1.2">
      <circle cx="9" cy="11" r="7.5" />
      <path d="M9 11 15 2M9 11h11" />
    </g>
  ),
  sIso: (
    <g fill="none">
      <path d="M2 2l6 6M12 12l6 6" stroke="#c65454" strokeWidth="1.3" />
      <path d="M10 0v7M10 13v7" stroke="#58b070" strokeWidth="1.3" />
      <path d="M8 8h4v4H8z" stroke={G} />
    </g>
  ),
  sTrack: (
    <g>
      <path d="M18 2 3 18h16" stroke="#fff" fill="none" strokeWidth="1.3" />
      <path d="M8 10l5-1-2 4z" fill="#fff" />
    </g>
  ),
  sOsnap: <path d="M6 3h13v16H3V6M1 1h5v5H1z" stroke="#fff" fill="none" strokeWidth="1.3" />,
  sAnno: (
    <g>
      <path d="M8 1l6 18-4-4H7l-5 4zM8 10v5" fill="#fff" />
      <circle cx="16" cy="5" r="2.5" stroke="#fff" fill="none" />
    </g>
  ),
  sAnno2: (
    <g>
      <path d="M8 3l6 16-4-4H6l-4 4z" fill={G} />
      <path d="M16 1l-4 6h3l-2 5 6-7h-3z" fill={G} />
    </g>
  ),
  sAnno3: <path d="M10 2l7 17-6-4H9l-6 4z" fill={G} />,
  sPlus: <path d="M10 0v20M0 10h20" stroke={G} strokeWidth="2" />,
  sIsolate: (
    <g>
      <path d="M3 13l7 3 7-3v4l-7 3-7-3z" fill="#cfcfcf" />
      <path d="M10 4l9 6-9 6-9-6z" fill="#5aaef0" />
      <path d="M4 5q6-6 12 0" stroke={G} strokeDasharray="2 1.5" fill="none" />
    </g>
  ),
  sShapes: (
    <g stroke={G} fill="none" strokeWidth="1.2">
      <path d="M2 2h7v6H2zM6 18l4-7 4 7z" />
      <circle cx="15.5" cy="7" r="3.5" />
    </g>
  ),
  sCad: (
    <g>
      <path d="M4 1h10l5 5v11H4z" fill="#5eb2e8" />
      <path d="M14 1v5h5z" fill="#dff0fb" />
      <path d="M1 11h7l1 2h4v6H1z" fill="#ffd84d" />
      <path d="M9 15l4 4 6-7" stroke="#2ea043" strokeWidth="2.5" fill="none" />
      <path d="M8 2v8M5 6h6" stroke="#e8f5fd" />
    </g>
  ),
  sFull: (
    <g stroke={G} fill="none" strokeWidth="1.2">
      <path d="M1 3h18v15H1zM4 11v4h4M12 6h4v4M4 15l4-4M16 6l-4 4" />
    </g>
  ),
  sMenu: <path d="M0 3h20M0 10h20M0 17h20" stroke={G} strokeWidth="2.4" />,

  win: <path d="M0 3l8-1v7.500H0zM9 2l11-2v9.500H9zM0 10.500h8V18l-8-1zM9 10.500h11V20L9 18z" fill="#fff" />,
  mic: (
    <g fill="none" stroke="#222" strokeWidth="1.3">
      <rect x="7" y="1" width="6" height="11" rx="1.5" />
      <path d="M4 9v3q0 4 6 4t6-4V9M10 16v4" />
    </g>
  ),
  taskview: (
    <path d="M1 0v3h12V0M1 6h12v8H1zM1 20v-3h12v3M18 0v3M18 10v10M17 6h2" stroke="#fff" fill="none" strokeWidth="1.4" />
  ),
  explorer: (
    <g>
      <path d="M1 2h8l1 2h9v14H1z" fill="#ffd768" />
      <path d="M1 6h18v12H1z" fill="#ffe9a3" />
      <path d="M4 19v-7h12v7h-4v-3H8v3z" fill="#37a5e8" />
    </g>
  ),
  mail: (
    <g>
      <path d="M0 8l10-7 10 7v11H0z" fill="#fff" />
      <path d="M0 8h20l-8 6 4 4z" fill="#1d1f22" />
    </g>
  ),
  chrome: (
    <g>
      <circle cx="10" cy="10" r="10" fill="#ffcd40" />
      <path d="M10 10 1.300 5A10 10 0 0 1 18.700 5H10z" fill="#de4b3d" />
      <path d="M1.300 5A10 10 0 0 0 10 20l4.500-8L5.500 12z" fill="#1aa05e" />
      <circle cx="10" cy="10" r="4.6" fill="#fff" />
      <circle cx="10" cy="10" r="3.6" fill="#4a8bf4" />
    </g>
  ),
  notepad: (
    <g>
      <path d="M6 2l12-1-3 17L2 16z" fill="#5fa7bb" />
      <path d="M7 2h9l-4 14-9-1z" fill="#b8e3ec" />
      <path d="M6 1l12-1v2L6 3z" fill="#dfe8ea" />
      <path d="M13 18l5-15 1 11z" fill="#2d5866" />
    </g>
  ),
  autocad: (
    <g>
      <path d="M0 0h20v20H0z" fill="#fbe6e2" />
      <path d="M3 18 8 2h4l5 16h-4l-1-4H8l-1 4z" fill="#b81f24" />
      <path d="M9 11h2.500L10 6z" fill="#fbe6e2" />
      <path d="M8 2h2L7 18H3z" fill="#7e1216" />
    </g>
  ),
  paint: (
    <g>
      <path d="M1 11q1-8 10-8 8 1 8 8 0 7-8 8-3 0-2-3 0-2-3-1-5 1-5-4z" fill="#bcd9f2" stroke="#7fa4c4" strokeWidth=".6" />
      <circle cx="5" cy="10" r="1.8" fill="#df3d32" />
      <circle cx="8" cy="6" r="1.7" fill="#f2a72e" />
      <circle cx="13" cy="6" r="1.6" fill="#4fae45" />
      <circle cx="7" cy="13.5" r="1.5" fill="#3c66cf" />
      <path d="M11 19 16 5" stroke="#b76a2a" strokeWidth="1.8" />
      <path d="M15 5l2-5 2 2-2 4z" fill="#e8b678" />
    </g>
  ),
  people: (
    <g fill="none" stroke="#fff" strokeWidth="1.4">
      <circle cx="13.5" cy="4" r="3" />
      <circle cx="7" cy="10" r="2.8" />
      <path d="M2 19q0-6 5-6t5 6M12 9q6-3 7 6" />
    </g>
  ),
  up: <path d="M2 14l8-8 8 8" stroke="#fff" fill="none" strokeWidth="1.5" />,
  cloud: (
    <g>
      <path d="M4 16a4 4 0 0 1 0-8q1-5 6-5t6 6z" fill="#9b9b9b" />
      <path d="M5 17a4 4 0 0 1 0-6q3-1 5 1 3-4 6-2 4 0 4 4 0 3-3 3z" fill="#fff" />
    </g>
  ),
  battery: (
    <g>
      <path d="M5 6h13v10H5z" fill="#fff" stroke="#fff" />
      <path d="M6 7h11v8H6z" fill="#fff" stroke="#1b1e23" />
      <path d="M19 9v4M1 3v4h5V3M2 1v2M5 1v2M3.500 7v5" stroke="#fff" strokeWidth="1.3" fill="none" />
    </g>
  ),
  wifi: (
    <g fill="none" strokeWidth="1.3">
      <path d="M2 18Q3 5 18 3" stroke="#777" />
      <path d="M6 18q1-9 12-11M10 18q1-6 8-7" stroke="#fff" />
      <circle cx="16" cy="16" r="1.8" fill="#fff" stroke="none" />
    </g>
  ),
  volume: (
    <g fill="none" stroke="#fff" strokeWidth="1.2">
      <path d="M1 8h3l4-4v12l-4-4H1zM11 7q2 3 0 6M14 5q3 5 0 10" />
      <path d="M17 3q4 7 0 14" stroke="#888" />
    </g>
  ),
  notice: (
    <g>
      <path d="M1 1h18v14h-5l-4 4v-4H1z" fill="#fff" />
      <path d="M4 5h12M4 8h12M4 11h8" stroke="#14171c" strokeWidth="1.2" />
    </g>
  ),
  wrench: (
    <path d="M3 2l3 4-3 2-2-3q-1 5 4 6l10 8q3 1 4-1t-1-3L9 8Q10 2 3 2z" fill="#c0c3c7" stroke="#555" strokeWidth=".6" />
  ),
  prompt: (
    <g>
      <rect x="0" y="0" width="20" height="20" rx="2" fill="#8c949f" />
      <path d="M4 5l5 4-5 4M10 15h6" stroke="#e8eaee" fill="none" strokeWidth="1.8" />
    </g>
  ),
  xBold: <path d="M4 4l12 12M16 4 4 16" stroke="#fff" strokeWidth="3.6" />,
  xThin: <path d="M4 4l12 12M16 4 4 16" stroke="#e6e6e6" strokeWidth="2.4" />,
  xDark: <path d="M4 4l12 12M16 4 4 16" stroke="#3c3c3c" strokeWidth="3" />,
  mMin: <path d="M2 14h16" stroke="#fff" strokeWidth="4" />,
  mRest: <path d="M2 7h11v11H2zM6 5V2h12v11h-3" stroke="#fff" fill="none" strokeWidth="2.6" />,
  pin: (
    <g fill="#e8ecf1" stroke="#5d6c80">
      <path d="M8 12l-6 7" />
      <path d="M4 8q2 6 8 8l2-4-6-6z" />
      <ellipse cx="13" cy="7" rx="6.5" ry="5" transform="rotate(45 13 7)" />
    </g>
  ),
  qWhite: (
    <g fill="none">
      <path d="M6 7q0-4 4-4t4 4q0 2-2 3t-2 3M10 15v3" stroke="#4d5f78" strokeWidth="5" />
      <path d="M6 7q0-4 4-4t4 4q0 2-2 3t-2 3M10 15v3" stroke="#fff" strokeWidth="3" />
    </g>
  ),
};

const Icon = ({ name, size = 20, box = 20 }: { name: string; size?: number; box?: number }) => (
  <svg width={size} height={size} viewBox={`0 0 ${box} ${box}`} aria-hidden="true">
    {ICONS[name]}
  </svg>
);

const Caret = ({ size = 7, color = "#fff", up }: { size?: number; color?: string; up?: boolean }) => (
  <svg width={size} height={size} viewBox="0 0 8 8" aria-hidden="true">
    <path d={up ? "M0 6h8L4 1z" : "M0 2h8L4 7z"} fill={color} />
  </svg>
);

/* ---------- shared ---------- */

const Page = styled.div`
  display: flex;
  flex-direction: column;
  min-height: 100vh;
  overflow: hidden;
  background: #373737;
  color: #f2f2f2;
  line-height: 20px;
`;

const IconButton = styled.button<{ $w?: number; $gap?: number }>`
  flex: none;
  display: flex;
  align-items: center;
  justify-content: center;
  width: ${(p) => p.$w ?? 30}px;
  margin-left: ${(p) => p.$gap ?? 0}px;
`;

/* ---------- header ---------- */

const Header = styled.header`
  display: flex;
  background: #535353;
  border-bottom: 1px solid #2d2d2d;
`;
const AppButton = styled.button`
  flex: none;
  display: flex;
  flex-direction: column;
  align-items: flex-start;
  width: 49px;
  height: 49px;
  background: linear-gradient(90deg, #a9a9a9, #c9c9c9 45%, #757575);
  border-right: 1px solid #000;
  border-bottom: 2px solid #111;
`;
const HeaderMain = styled.div`
  flex: 1;
  min-width: 0;
`;
const TitleBar = styled.div`
  display: flex;
  height: 30px;
  border-bottom: 1px solid #2b2b2b;
`;
const chrome = css`
  display: flex;
  align-items: stretch;
  background: linear-gradient(#9d9d9d, #8a8a8a 30%, #535353);
`;
const QuickAccess = styled.div`
  ${chrome}
  padding-left: 6px;
`;
const InfoCenter = styled.div`
  ${chrome}
`;
const WorkspaceBox = styled.div`
  position: relative;
  width: 225px;
  display: flex;
  align-items: center;
  gap: 2px;
  padding-left: 4px;
  background: linear-gradient(#6a6a6a, #545454);
  border: 1px solid #3a3a3a;
`;
const PlainSelect = styled.select`
  flex: 1;
  min-width: 0;
  height: 100%;
  appearance: none;
  border: 0;
  background: transparent;
  padding: 0;
`;
const SelectCaret = styled.span`
  position: absolute;
  right: 3px;
  top: 50%;
  transform: translateY(-50%);
  pointer-events: none;
`;
const Title = styled.h1`
  flex: 1;
  margin: 0;
  background: #fff;
  color: #111;
  font-size: 14px;
  font-weight: 400;
  line-height: 28px;
  text-align: center;
  white-space: pre;
`;
const SearchInput = styled.input`
  width: 225px;
  padding: 0 4px;
  border: 1px solid #4a4a4a;
  background: #757575;
  font-size: 13px;
  font-style: italic;
  &::placeholder { color: #c6c6c6; opacity: 1; }
`;
const UserButton = styled.button`
  width: 102px;
  text-align: left;
  overflow: hidden;
`;
const Divider = styled.span<{ $gap?: number; $c?: string }>`
  flex: none;
  width: 1px;
  margin: 3px ${(p) => p.$gap ?? 6}px;
  background: ${(p) => p.$c ?? "#8c8c8c"};
`;
const WindowControls = styled.div`
  display: flex;
  background: #fff;
  padding: 0 4px 2px 27px;
`;
const TabRow = styled.nav`
  display: flex;
  align-items: stretch;
  height: 23px;
  padding-left: 8px;
  padding-top: 2px;
`;
const RibbonTab = styled.button<{ $w: number; $on?: boolean; $hot?: boolean }>`
  flex: none;
  width: ${(p) => p.$w}px;
  line-height: 20px;
  color: ${(p) => (p.$on || p.$hot ? "#f4f4f4" : "#c9c9c9")};
  ${(p) => p.$on && css`
    margin-right: 2px;
    background: linear-gradient(#7a7a7a, #5e5e5e);
    border: 1px solid #333;
    border-bottom: 0;
    border-radius: 3px 3px 0 0;
  `}
  ${(p) => p.$hot && css`
    background: linear-gradient(#5e5e5e, #747474);
    border: 1px solid #23668f;
  `}
`;
const Collapse = styled.span`
  display: flex;
  align-items: center;
  justify-content: center;
  width: 18px;
  height: 10px;
  background: #dcdde2;
  border-radius: 3px;
`;

const TABS: [string, number][] = [
  ["Home", 62], ["Insert", 60], ["Annotate", 85], ["Modify", 73], ["Analyze", 76], ["View", 56],
  ["Manage", 78], ["Output", 70], ["Survey", 67], ["Autodesk InfraWorks", 161], ["Collaborate", 102],
  ["Help", 57], ["Add-ins", 75], ["Express Tools", 112], ["Featured Apps", 121], ["Geolocation", 103],
];

const TopHeader = () => (
  <Header>
    <AppButton aria-label="Application menu">
      <svg width="48" height="47" viewBox="0 0 48 47">
        <path d="M6 34 16 3q3-2 8 0l11 30-6 1-3-8-8 1q-3 6-6 9z" fill="#1d6fa5" />
        <path d="M16 3q3-2 8 0l11 30-6 1z" fill="#2b86bd" />
        <path d="M17 22l3-10 4 12-10 3z" fill="#c8c8c8" />
        <path d="M6 34q9-2 13-12l7 3q-6 8-20 9z" fill="#55b4dd" />
        <path d="M37 21h9l-4.500 5z" fill="#2b3140" />
        <text x="13" y="46" fontSize="9" fontWeight="700" fontFamily="Liberation Sans, sans-serif" fill="#111">C3D</text>
      </svg>
    </AppButton>
    <HeaderMain>
      <TitleBar>
        <QuickAccess>
          {["newFile", "open", "save", "openWeb", "saveWeb", "print", "undo"].map((n) => (
            <IconButton key={n} aria-label={n}><Icon name={n} /></IconButton>
          ))}
          <IconButton $w={14} aria-label="Undo list"><Caret /></IconButton>
          <IconButton aria-label="Redo"><Icon name="redo" /></IconButton>
          <IconButton $w={17} aria-label="Redo list"><Caret color="#ccc" /></IconButton>
          <WorkspaceBox>
            <Icon name="gear" />
            <PlainSelect aria-label="Workspace" defaultValue="Civil 3D"><option>Civil 3D</option></PlainSelect>
            <SelectCaret><Caret size={9} /></SelectCaret>
          </WorkspaceBox>
          <IconButton $w={20} aria-label="Customize toolbar"><Icon name="customize" size={14} /></IconButton>
        </QuickAccess>
        <Title>{"Autodesk Civil 3D 2019    4.1.dwg"}</Title>
        <InfoCenter>
          <IconButton $w={17} aria-label="Expand">
            <svg width="6" height="9" viewBox="0 0 6 9"><path d="M0 0v9l6-4.500z" fill="#fff" /></svg>
          </IconButton>
          <SearchInput aria-label="Search" placeholder="Type a keyword or phrase" />
          <IconButton aria-label="Find"><Icon name="binoc" /></IconButton>
          <IconButton aria-label="Account"><Icon name="user" /></IconButton>
          <UserButton>mateusqueiro...</UserButton>
          <IconButton $w={14} aria-label="Account menu"><Caret /></IconButton>
          <IconButton $gap={4} aria-label="App store"><Icon name="cart" /></IconButton>
          <IconButton aria-label="Connect"><Icon name="a360" /></IconButton>
          <IconButton $w={12} aria-label="Connect menu"><Caret /></IconButton>
          <Divider $gap={8} />
          <IconButton aria-label="Help"><Icon name="help" /></IconButton>
          <IconButton $w={16} aria-label="Help menu"><Caret /></IconButton>
        </InfoCenter>
        <WindowControls>
          {["min", "restore", "close"].map((n) => (
            <IconButton key={n} $w={58} aria-label={n}><Icon name={n} /></IconButton>
          ))}
        </WindowControls>
      </TitleBar>
      <TabRow>
        {TABS.map(([t, w]) => (
          <RibbonTab key={t} $w={w} $on={t === "Home"} $hot={t === "Geolocation"}>{t}</RibbonTab>
        ))}
        <IconButton $gap={30} $w={20} aria-label="Minimize ribbon">
          <Collapse><Caret up size={8} color="#2f333b" /></Collapse>
        </IconButton>
        <IconButton $w={17} aria-label="Ribbon menu"><Caret /></IconButton>
      </TabRow>
    </HeaderMain>
  </Header>
);

/* ---------- ribbon ---------- */

const Ribbon = styled.section`
  display: flex;
  height: 124px;
  background: linear-gradient(#4b4b4b, #373737);
  border-bottom: 1px solid #8e8e8e;
`;
const Panel = styled.section<{ $w: number }>`
  flex: none;
  display: flex;
  flex-direction: column;
  width: ${(p) => p.$w}px;
  background: #5b5b5b;
  border-right: 2px solid #474747;
  border-bottom: 1px solid #2d2d2d;
`;
const PanelBody = styled.div<{ $pad?: number }>`
  flex: 1;
  display: flex;
  padding: 4px 0 0 ${(p) => p.$pad ?? 0}px;
`;
const PanelTitle = styled.button`
  display: flex;
  align-items: center;
  justify-content: center;
  gap: 8px;
  height: 22px;
  padding-top: 1px;
  background: #4c4c4c;
`;
const Column = styled.div<{ $w?: number }>`
  flex: none;
  width: ${(p) => (p.$w ? `${p.$w}px` : "auto")};
`;
const Cmd = styled.button`
  display: flex;
  align-items: center;
  gap: 7px;
  width: 100%;
  height: 31px;
`;
const SlimCmd = styled(Cmd)`
  gap: 8px;
`;
const IconCmd = styled.button`
  display: flex;
  align-items: center;
  width: 30px;
  height: 31px;
`;
const CmdRow = styled.div`
  display: flex;
`;
const ToolspaceButton = styled.button`
  display: flex;
  flex-direction: column;
  align-items: center;
  justify-content: flex-start;
  gap: 3px;
  width: 73px;
  height: 89px;
  padding-top: 4px;
  background: linear-gradient(#8aaede, #50678f);
  border: 1px solid #2b3f66;
`;
const PaletteGrid = styled.div`
  display: grid;
  grid-template-columns: 28px 28px;
  gap: 3px 2px;
  margin-left: 3px;
  align-content: start;
`;
const PaletteButton = styled.button<{ $on?: boolean }>`
  display: flex;
  align-items: center;
  justify-content: center;
  height: 28px;
  ${(p) => p.$on && css`
    background: linear-gradient(#84a6d6, #4e658c);
    border: 1px solid #2b3f66;
  `}
`;
const BigCmd = styled.button<{ $w: number }>`
  display: flex;
  flex-direction: column;
  align-items: center;
  width: ${(p) => p.$w}px;
  height: 90px;
  gap: 5px;
  padding-top: 3px;
  line-height: 20px;
  white-space: normal;
`;
const LayerBox = styled.div`
  position: relative;
  display: flex;
  align-items: center;
  gap: 4px;
  width: 260px;
  height: 29px;
  margin-bottom: 2px;
  padding-left: 4px;
  background: linear-gradient(#6c6c6c, #505050);
  border: 1px solid #333;
`;
const Swatch = styled.span`
  width: 18px;
  height: 18px;
  margin: 0 2px 0 4px;
  background: #fff;
  border: 1px solid #111;
`;

type Item = [icon: string, label: string, caret?: boolean];
const CmdColumn = ({ items, w }: { items: Item[]; w?: number }) => (
  <Column $w={w}>
    {items.map(([icon, label, caret]) => (
      <Cmd key={icon}>
        <Icon name={icon} />
        {label}
        {caret && <Caret />}
      </Cmd>
    ))}
  </Column>
);
const GlyphColumn = ({ items, w }: { items: [string, boolean][]; w: number }) => (
  <Column $w={w}>
    {items.map(([icon, caret]) => (
      <SlimCmd key={icon} aria-label={icon}>
        <Icon name={icon} />
        {caret && <Caret />}
      </SlimCmd>
    ))}
  </Column>
);
const Foot = ({ text, plain }: { text: string; plain?: boolean }) => (
  <PanelTitle>
    {text}
    {!plain && <Caret size={9} />}
  </PanelTitle>
);

const RibbonBar = () => (
  <Ribbon>
    <Panel $w={142}>
      <PanelBody $pad={3}>
        <ToolspaceButton>
          <Icon name="tools" size={40} box={40} />
          Toolspace
        </ToolspaceButton>
        <PaletteGrid>
          {["prospector", "settings", "survey", "toolbox", "calc", "props"].map((n, i) => (
            <PaletteButton key={n} $on={i < 4} aria-label={n}><Icon name={n} /></PaletteButton>
          ))}
        </PaletteGrid>
      </PanelBody>
      <Foot text="Palettes" />
    </Panel>
    <Panel $w={163}>
      <PanelBody $pad={31}>
        <CmdColumn items={[["points", "Points", true], ["surfaces", "Surfaces", true], ["traverse", "Traverse", true]]} />
      </PanelBody>
      <Foot text="Create Ground Data" />
    </Panel>
    <Panel $w={401}>
      <PanelBody $pad={6}>
        <CmdColumn w={133} items={[["parcel", "Parcel", true], ["feature", "Feature Line", true], ["grading", "Grading", true]]} />
        <CmdColumn w={122} items={[["alignment", "Alignment", true], ["profile", "Profile", true], ["corridor", "Corridor", true]]} />
        <CmdColumn items={[["intersections", "Intersections", true], ["assembly", "Assembly", true], ["pipe", "Pipe Network", true]]} />
      </PanelBody>
      <Foot text="Create Design" />
    </Panel>
    <Panel $w={169}>
      <PanelBody $pad={16}>
        <CmdColumn items={[["profileView", "Profile View", true], ["sampleLines", "Sample Lines"], ["sectionViews", "Section Views", true]]} />
      </PanelBody>
      <Foot text="Profile & Section Views" plain />
    </Panel>
    <Panel $w={148}>
      <PanelBody $pad={6}>
        <GlyphColumn w={46} items={[["line", true], ["points2", true], ["curve", true]]} />
        <GlyphColumn w={50} items={[["arc", true], ["circle", true], ["ellipse", true]]} />
        <GlyphColumn w={40} items={[["pline", false], ["rect", true], ["hatch", true]]} />
      </PanelBody>
      <Foot text="Draw" />
    </Panel>
    <Panel $w={316}>
      <PanelBody $pad={6}>
        <CmdColumn w={91} items={[["move", "Move"], ["copy", "Copy"], ["stretch", "Stretch"]]} />
        <CmdColumn w={88} items={[["rotate", "Rotate"], ["mirror", "Mirror"], ["scale", "Scale"]]} />
        <CmdColumn w={95} items={[["trim", "Trim", true], ["fillet", "Fillet", true], ["array", "Array", true]]} />
        <GlyphColumn w={20} items={[["erase", false], ["box", false], ["offset", false]]} />
      </PanelBody>
      <Foot text="Modify" />
    </Panel>
    <Panel $w={341}>
      <PanelBody>
        <BigCmd $w={77}>
          <Icon name="layerProps" size={40} box={40} />
          Layer Properties
        </BigCmd>
        <Column>
          <LayerBox>
            <Icon name="bulb" />
            <Icon name="sun" />
            <Icon name="unlock" />
            <Swatch />
            <PlainSelect aria-label="Layer" defaultValue="0"><option>0</option></PlainSelect>
            <SelectCaret><Caret size={9} /></SelectCaret>
          </LayerBox>
          <CmdRow>
            {["lOff", "lIso", "lFreeze", "lLock"].map((n) => (
              <IconCmd key={n} aria-label={n}><Icon name={n} /></IconCmd>
            ))}
            <Column><Cmd><Icon name="lCurrent" />Make Current</Cmd></Column>
          </CmdRow>
          <CmdRow>
            {["lOn", "lUniso", "lThaw", "lUnlock"].map((n) => (
              <IconCmd key={n} aria-label={n}><Icon name={n} /></IconCmd>
            ))}
            <Column><Cmd><Icon name="lMatch" />Match Layer</Cmd></Column>
          </CmdRow>
        </Column>
      </PanelBody>
      <Foot text="Layers" />
    </Panel>
    <Panel $w={99}>
      <PanelBody>
        <BigCmd $w={69}>
          <Icon name="paste" size={40} box={40} />
          Paste
          <Caret />
        </BigCmd>
        <GlyphColumn w={20} items={[["cut", false], ["copyClip", false], ["pasteSpec", false]]} />
      </PanelBody>
      <Foot text="Clipboard" plain />
    </Panel>
  </Ribbon>
);

/* ---------- document tabs ---------- */

const DocTabs = styled.nav`
  display: flex;
  align-items: flex-end;
  height: 36px;
  padding: 0 0 0 17px;
  background: #373737;
  border-bottom: 5px solid #595959;
`;
const DocTab = styled.button<{ $on?: boolean; $w: number }>`
  display: flex;
  align-items: center;
  justify-content: space-between;
  width: ${(p) => p.$w}px;
  height: 27px;
  margin-right: ${(p) => (p.$on ? 0 : -10)}px;
  padding: 0 26px 0 22px;
  color: ${(p) => (p.$on ? "#f2f2f2" : "#b4b4b4")};
  background: ${(p) => (p.$on ? "linear-gradient(#8a8a8a, #5e5e5e)" : "linear-gradient(#5f5f5f, #525252)")};
  clip-path: polygon(0 100%, 6px 94%, 10px 80%, 14px 20%, 17px 5%, 22px 0, calc(100% - 22px) 0, calc(100% - 17px) 5%, calc(100% - 14px) 20%, calc(100% - 10px) 80%, calc(100% - 6px) 94%, 100% 100%);
`;
const AddTab = styled.button`
  width: 26px;
  height: 18px;
  margin-bottom: 4px;
  border-radius: 4px 12px 6px 12px;
  background: #555;
  color: #c8c8c8;
  font-size: 18px;
  font-weight: 700;
  line-height: 18px;
`;

/* ---------- toolspace ---------- */

const Main = styled.main`
  flex: 1;
  display: flex;
  min-height: 0;
  background: #5b5b5b;
`;
const Toolspace = styled.aside`
  flex: none;
  display: flex;
  flex-direction: column;
  width: 355px;
  padding: 3px 0 8px;
`;
const PaletteTitle = styled.h2`
  margin: 0;
  padding-left: 18px;
  height: 27px;
  background: #515151;
  border-radius: 0 6px 6px 0;
  color: #f2f2f2;
  font-size: 14px;
  font-weight: 400;
  line-height: 26px;
`;
const PaletteTools = styled.div`
  display: flex;
  align-items: center;
  gap: 16px;
  height: 36px;
  padding: 0 8px 0 7px;
`;
const Grow = styled.span`
  flex: 1;
`;
const ViewBox = styled.div`
  position: relative;
  display: flex;
  height: 24px;
  padding-left: 3px;
  background: #e2e2e2;
  border: 1px solid #a0a0a0;
  border-width: 1px 1px 1px 0;
  color: #111;
  font-size: 13px;
`;
const Tree = styled.ul`
  flex: 1;
  margin-top: 3px;
  padding-top: 3px;
  background: #fff;
  border-right: 1px solid #888;
  color: #151515;
`;
const Row = styled.li`
  display: flex;
  align-items: center;
  height: 24px;
`;
const RootCell = styled.span<{ $line?: boolean; $stub?: boolean }>`
  flex: none;
  display: flex;
  align-items: center;
  align-self: stretch;
  width: ${(p) => (p.$stub ? 25 : 23)}px;
  padding-left: 8px;
  background:
    ${(p) => (p.$line ? "repeating-linear-gradient(#888 0 1px, transparent 1px 2px) 13px 0 / 1px 100% no-repeat" : "none")}
    ${(p) => (p.$stub ? ", repeating-linear-gradient(90deg, #888 0 1px, transparent 1px 2px) 19px 12px / 5px 1px no-repeat" : "")};
`;
const ChildCell = styled.span<{ $last?: boolean }>`
  flex: none;
  display: flex;
  align-items: center;
  align-self: stretch;
  width: 21px;
  padding-left: 4px;
  background:
    repeating-linear-gradient(#888 0 1px, transparent 1px 2px) 9px 0 / 1px ${(p) => (p.$last ? "50%" : "100%")} no-repeat,
    repeating-linear-gradient(90deg, #888 0 1px, transparent 1px 2px) 10px 12px / 9px 1px no-repeat;
`;
const Expander = styled.button`
  display: flex;
  width: 11px;
  height: 11px;
  border: 1px solid #919191;
  border-radius: 1px;
  background: #fafafa;
`;
const NodeName = styled.span<{ $bold?: boolean }>`
  margin-left: 7px;
  font-weight: ${(p) => (p.$bold ? 700 : 400)};
`;
const DetailPane = styled.div`
  height: 97px;
  margin-top: 8px;
  border: 1px solid #a5a5a5;
  border-left: 0;
`;
const SideTabs = styled.nav`
  flex: none;
  display: flex;
  flex-direction: column;
  width: 27px;
  padding-top: 32px;
  margin-right: 4px;
`;
const SideTab = styled.button<{ $on?: boolean }>`
  flex: none;
  width: 27px;
  height: 160px;
  writing-mode: vertical-rl;
  transform: rotate(180deg);
  border: 1px solid #333;
  border-right-width: ${(p) => (p.$on ? 0 : 1)}px;
  border-radius: 6px 0 0 6px;
  background: ${(p) => (p.$on ? "#5b5b5b" : "#525252")};
  color: ${(p) => (p.$on ? "#f0f0f0" : "#b0b0b0")};
`;

const Toggle = ({ open, label }: { open?: boolean; label: string }) => (
  <Expander aria-label={`Toggle ${label}`}>
    <svg width="9" height="9" viewBox="0 0 9 9">
      <path d={open ? "M1 4.500h7" : "M1 4.500h7M4.500 1v7"} stroke="#3a5790" />
    </svg>
  </Expander>
);

type Node = [icon: string, name: string, branch?: boolean];
const DRAWING: Node[] = [
  ["tPoints", "Points"], ["tPointGroups", "Point Groups", true], ["tSurf", "Surfaces", true],
  ["tAlign", "Alignments", true], ["tFeature", "Feature Lines"], ["tSites", "Sites"], ["tCatch", "Catchments"],
  ["tPipe", "Pipe Networks", true], ["tPipe", "Pressure Networks"], ["tRoad", "Corridors"],
  ["tAssembly", "Assemblies", true], ["tInter", "Intersections"], ["tSurvey", "Survey", true],
  ["tFrames", "View Frame Groups"],
];
const SHORTCUTS: Node[] = [
  ["tSurfS", "Surfaces"], ["tAlignS", "Alignments", true], ["tPipeS", "Pipe Networks"],
  ["tPipeS", "Pressure Networks"], ["tRoadS", "Corridors"], ["tFramesS", "View Frame Groups"],
];
const Children = ({ nodes, line }: { nodes: Node[]; line?: boolean }) => (
  <>
    {nodes.map(([icon, name, branch], i) => (
      <Row key={name}>
        <RootCell $line={line} />
        <ChildCell $last={i === nodes.length - 1}>{branch && <Toggle label={name} />}</ChildCell>
        <Icon name={icon} size={16} />
        <NodeName>{name}</NodeName>
      </Row>
    ))}
  </>
);

const ToolspacePalette = () => (
  <>
    <Toolspace>
      <PaletteTitle>TOOLSPACE</PaletteTitle>
      <PaletteTools>
        <IconButton $w={16} aria-label="Find item"><Icon name="find" size={16} /></IconButton>
        <Grow />
        <IconButton $w={16} aria-label="Hierarchy"><Icon name="hierarchy" size={16} /></IconButton>
        <IconButton $w={16} aria-label="Panorama"><Icon name="table" size={16} /></IconButton>
        <IconButton $w={16} aria-label="Help"><Icon name="question" size={16} /></IconButton>
      </PaletteTools>
      <ViewBox>
        <PlainSelect aria-label="View" defaultValue="a"><option value="a">Active Drawing View</option></PlainSelect>
        <SelectCaret>
          <svg width="12" height="8" viewBox="0 0 12 8"><path d="M1 1l5 5 5-5" stroke="#444" fill="none" /></svg>
        </SelectCaret>
      </ViewBox>
      <Tree>
        <Row>
          <RootCell $stub><Toggle open label="4.1" /></RootCell>
          <Icon name="tDwg" size={16} />
          <NodeName $bold>4.1</NodeName>
        </Row>
        <Children nodes={DRAWING} line />
        <Row>
          <RootCell $stub><Toggle open label="Data Shortcuts" /></RootCell>
          <Icon name="tShort" size={16} />
          <NodeName>Data Shortcuts []</NodeName>
        </Row>
        <Children nodes={SHORTCUTS} />
      </Tree>
      <DetailPane />
    </Toolspace>
    <SideTabs>
      {["Prospector", "Settings", "Survey", "Toolbox"].map((t) => (
        <SideTab key={t} $on={t === "Prospector"}>{t}</SideTab>
      ))}
    </SideTabs>
  </>
);

/* ---------- drawing area ---------- */

const Canvas = styled.section`
  position: relative;
  flex: 1;
  min-width: 0;
  overflow: hidden;
  background: #212830;
`;
const Drawing = styled.svg`
  position: absolute;
  inset: 0;
  width: 100%;
  height: 100%;
`;
const ViewLabel = styled.div`
  position: absolute;
  left: 3px;
  top: 6px;
`;
const MdiButtons = styled.div`
  position: absolute;
  right: 8px;
  top: 10px;
  display: flex;
`;
const NavBar = styled.div`
  position: absolute;
  right: 4px;
  top: 32px;
  width: 40px;
  height: 294px;
  border-radius: 4px;
  background: rgba(135, 138, 142, 0.55);
`;

const GRID = 14.165;
const verticals = Array.from({ length: 107 }, (_, i) => 0.3 + i * GRID);
const horizontals = Array.from({ length: 49 }, (_, i) => 61.5 + (i + 1) * GRID);
const RED_TOP =
  "0,319 67,302 137,287 188,274 238,266 294,258 367,252 406,247 464,246 503,243 576,242 603,241 629,244 663,248 694,249 745,258 784,262 837,277 864,280 905,291 932,300 949,304";
const CYAN_BOTTOM = "1497,493 1351,432 1283,403 1220,383 1157,362 1051,335 1002,316 949,304";

const ProfileDrawing = () => (
  <Drawing viewBox="0 0 1497 757" preserveAspectRatio="xMinYMin slice" aria-label="Profile view">
    <polygon points={`${RED_TOP} 0,481`} fill="#f00" />
    <polygon points={`949,304 1034,288 1497,349 ${CYAN_BOTTOM}`} fill="#0ff" />
    <g stroke="#848484" strokeOpacity="0.72" strokeWidth="1.3">
      {verticals.map((x) => <path key={x} d={`M${x} 62V757`} />)}
      {horizontals.map((y) => <path key={y} d={`M0 ${y}H1497`} />)}
    </g>
    <path d="M0 61.500H1497" stroke="#1ad6dc" />
    <path d="M1034.500 178V288" stroke="#7fbf5f" />
    <polyline points="0,481 949,304 1034,288 1497,349" fill="none" stroke="#f0c" strokeWidth="1.4" />
    <g fill="#ff0" fontFamily="Liberation Sans, sans-serif" fontSize="10">
      <text transform="translate(1033 241) rotate(-90)">EST.39+15.000</text>
      <text transform="translate(1045 241) rotate(-90)">C.:627.000</text>
    </g>
    <g stroke="#fff" fill="none">
      <path d="M923 .5h97M971.500 4v27" />
      <path d="M969.500 .5h4v3h-4z" />
      <path d="M20.500 674v62H83M15.500 730.500h11v11h-11z" />
      <path d="M22 655l7 8 7-8M29 663v8M87 720l15 15M102 720l-15 15" strokeWidth="1.2" />
      <path
        d="M4.500 29v-5h4v3h-4M11.500 24.500h4v3h-4zM4.500 35v-3l2-2 2 2v3zM11.500 31.500h4v4h-4z"
        strokeWidth="1.2"
      />
    </g>
  </Drawing>
);

const NavIcons = () => (
  <svg width="40" height="294" viewBox="0 0 40 294" fill="none" stroke="#3c4248" strokeOpacity="0.6" strokeWidth="1.5" aria-hidden="true">
    <circle cx="33" cy="6" r="4.5" />
    <path d="M31 4l4 4M35 4l-4 4" />
    <path d="M20 22l13 6v14l-13 7-13-7V28zM7 28l13 6 13-6M20 34v15M11 34l5 3M24 38l5-3" />
    <circle cx="20" cy="71" r="12" />
    <circle cx="20" cy="71" r="6" />
    <path d="M8 71h6M26 71h6M20 59v6M20 77v6M18 94h5l-2.500 3z" />
    <path d="M7 124l6 10q7 6 14 0 5-6 5-18M7 124q3-2 6 3v-12M13 127v-14q2-2 4 0v10M17 122v-11q2-2 4 0v11M21 123v-10q2-2 4 0v11M25 124v-7q3-2 6 1" />
    <path d="M6 146l16 16M22 146 6 162M6 150v-4h4M18 146h4v4M6 158v4h4M18 181h5l-2.500 3z" />
    <circle cx="26" cy="162" r="6" />
    <path d="M30 167l6 7" strokeWidth="3" />
    <path d="M20 192v26M16 197l4-6 4 6zM16 213l4 6 4-6zM10 204q-8 4 0 8 10 4 20 0 7-4 0-8-8-3-14-1M18 228h5l-2.500 3z" />
    <path d="M6 242h8v10H6zM16 242h8v10h-8zM26 242h8v10h-8zM6 255h19v17H6z" />
    <path d="M12 259v9l8-4.500z" fill="#3c4248" />
    <circle cx="33" cy="287" r="4.5" />
    <path d="M31 287h4" />
  </svg>
);

/* ---------- profile layout window ---------- */

const LayoutWindow = styled.section`
  position: absolute;
  right: 119px;
  top: 31px;
  width: 735px;
  padding: 0 8px 8px;
  background: linear-gradient(#bccbdb, #d6e3f2 45%);
  border: 1px solid #f4f6f9;
  border-top: 2px solid #eef2f6;
  box-shadow: 0 0 0 1px #22303f;
  color: #1a1a1a;
`;
const LayoutHead = styled.header`
  display: flex;
  align-items: flex-start;
  height: 36px;
  margin-right: -8px;
  color: #8d99a6;
`;
const LayoutTitle = styled.h2`
  flex: 1;
  margin: 0;
  padding-top: 11px;
  font-size: 14px;
  font-weight: 400;
`;
const CaptionButton = styled.button<{ $w: number; $close?: boolean }>`
  display: flex;
  align-items: center;
  justify-content: center;
  width: ${(p) => p.$w}px;
  height: 20px;
  border: 1px solid #5d718a;
  border-top: 0;
  background: ${(p) =>
    p.$close ? "linear-gradient(#e6a89d, #d2665a 45%, #b52c1c 50%, #cf5b45)" : "linear-gradient(#c6d5e6, #a9bfd8 45%, #8eaccc 50%, #a4c0de)"};
`;
const LayoutTools = styled.div`
  display: flex;
  height: 32px;
  padding-left: 4px;
  background: #f0f0f0;
  border-bottom: 1px solid #d2d2d2;
`;
const LayoutStatus = styled.div`
  display: flex;
  align-items: center;
  height: 24px;
  background: #f0f0f0;
`;
const StatusCell = styled.span<{ $grow?: boolean }>`
  flex: ${(p) => (p.$grow ? "1" : "0 0 233px")};
  padding-left: 2px;
  border-right: 1px solid #cfcfcf;
`;

const LT = ({ n, w = 30, gap = 0 }: { n: string; w?: number; gap?: number }) => (
  <IconButton $w={w} $gap={gap} aria-label={n}><Icon name={n} size={18} /></IconButton>
);
const LC = ({ dark }: { dark?: boolean }) => (
  <IconButton $w={14} aria-label="More"><Caret size={9} color={dark ? "#000" : "#777"} /></IconButton>
);

const ProfileLayoutTools = () => (
  <LayoutWindow>
    <LayoutHead>
      <LayoutTitle>Profile Layout Tools - Terreno</LayoutTitle>
      <CaptionButton $w={29} aria-label="Pin"><Icon name="pin" size={18} /></CaptionButton>
      <CaptionButton $w={29} aria-label="Help"><Icon name="qWhite" size={16} /></CaptionButton>
      <CaptionButton $w={41} $close aria-label="Close"><Icon name="xBold" size={20} /></CaptionButton>
    </LayoutHead>
    <LayoutTools>
      <LT n="vTan" /><LC />
      <LT n="vAdd" gap={7} /><LT n="vDel" w={28} /><LT n="vMove" w={26} />
      <LT n="vLine" gap={7} /><LC />
      <LT n="vCurve" w={34} /><LC />
      <LT n="vConv" gap={8} />
      <Divider $gap={7} $c="#a5a5a5" />
      <LT n="vEdit" w={28} /><LT n="vLift" w={28} /><LT n="vSet" w={28} />
      <Divider $gap={8} $c="#a5a5a5" />
      <LT n="vWarn" /><LC dark />
      <LT n="vPick" w={34} gap={9} /><LT n="vSub" w={34} /><LT n="vErase" w={34} />
      <LT n="vList" w={33} /><LT n="vGrid" w={33} /><LT n="vPanel" w={33} />
      <Divider $gap={5} $c="#a5a5a5" />
      <LT n="vUndo" w={28} /><LT n="vRedo" />
    </LayoutTools>
    <LayoutStatus>
      <StatusCell $grow>Current command: Draw Tangents</StatusCell>
      <StatusCell>PVI based</StatusCell>
    </LayoutStatus>
  </LayoutWindow>
);

/* ---------- command line ---------- */

const CommandLine = styled.div`
  position: absolute;
  left: 289px;
  bottom: 1px;
  display: flex;
  align-items: center;
  width: 918px;
  height: 33px;
  background: rgba(90, 90, 90, 0.92);
  border: 1px solid #777;
`;
const Grip = styled.span`
  width: 7px;
  height: 22px;
  margin: 0 4px;
  background: radial-gradient(#aaa 1px, transparent 1px) 0 0 / 4px 4px;
`;
const CommandField = styled.label`
  flex: 1;
  align-self: stretch;
  display: flex;
  align-items: center;
  gap: 6px;
  margin-left: 2px;
  padding: 0 6px;
  background: rgba(205, 206, 208, 0.92);
`;
const CommandInput = styled.input`
  flex: 1;
  border: 0;
  padding: 0;
  background: none;
  color: #333;
  font-family: "DejaVu Sans Mono", "Liberation Mono", monospace;
  font-size: 15px;
  font-style: italic;
  &::placeholder { color: #747474; opacity: 1; }
`;

/* ---------- right toolbars ---------- */

const Dock = styled.aside`
  flex: none;
  display: flex;
  flex-direction: column;
  gap: 1px;
  width: 37px;
  padding-left: 4px;
  overflow: hidden;
  contain: size;
`;
const DockBar = styled.div`
  flex: none;
  width: 31px;
  padding-top: 10px;
  border: 1px solid #333;
  background: radial-gradient(#222 1px, transparent 1px) 3px 3px / 3px 3px repeat-x, #5e5e5e;
`;
const DockButton = styled.button`
  display: flex;
  align-items: center;
  justify-content: center;
  width: 100%;
  height: 28px;
`;
const DockRule = styled.hr`
  height: 2px;
  margin: 2px;
  border: 0;
  background: #e6e6e6;
`;
const DOCK_GROUPS = [
  ["r1", "r2", "r3", "r4", "r5", "r6", "r7", "r8", "r9", "r10", "r11", "r12", "r13"],
  ["r14"],
  ["r15", "r16", "r17"],
  ["r18", "r19", "r20", "r21", "r22", "r23", "r24"],
];
const DockTools = () => (
  <Dock>
    <DockBar>
      {DOCK_GROUPS.map((g, i) => (
        <React.Fragment key={i}>
          {i > 0 && <DockRule />}
          {g.map((n) => (
            <DockButton key={n} aria-label={n}><Icon name={n} /></DockButton>
          ))}
        </React.Fragment>
      ))}
    </DockBar>
    <DockBar>
      {["r14", "r25"].map((n) => (
        <DockButton key={n} aria-label={n}><Icon name={n} /></DockButton>
      ))}
    </DockBar>
  </Dock>
);

/* ---------- bottom ---------- */

const LayoutTabs = styled.nav`
  display: flex;
  height: 25px;
  padding-left: 14px;
  border-top: 2px solid #4c4c4c;
  background: #373737;
`;
const LayoutTab = styled.button<{ $on?: boolean; $w: number }>`
  width: ${(p) => p.$w}px;
  height: 21px;
  color: ${(p) => (p.$on ? "#fff" : "#a9a9a9")};
  font-weight: ${(p) => (p.$on ? 700 : 400)};
  background: ${(p) => (p.$on ? "linear-gradient(#5b5b5b, #868686)" : "#545454")};
  clip-path: polygon(0 0, 100% 0, calc(100% - 4px) 60%, calc(100% - 10px) 100%, 9px 100%, 4px 75%);
`;
const AddLayout = styled.button`
  width: 28px;
  height: 20px;
  margin: 1px 0 0 2px;
  border-radius: 10px 4px 12px 4px;
  background: #545454;
  color: #c8c8c8;
  font-size: 18px;
  font-weight: 700;
  line-height: 18px;
`;
const StatusRow = styled.footer`
  display: flex;
  justify-content: flex-end;
  height: 34px;
`;
const StatusGroup = styled.div`
  display: flex;
  align-items: center;
  border: 1px solid #7d7d7d;
  background: #4a4a4a;
  margin-left: -1px;
`;
const StatusButton = styled.button<{ $w: number; $on?: boolean }>`
  display: flex;
  align-items: center;
  justify-content: center;
  gap: 4px;
  width: ${(p) => p.$w}px;
  height: 28px;
  background: ${(p) => (p.$on ? "#5b8bc4" : "none")};
`;
const SB = ({ n, w = 29, on }: { n: string; w?: number; on?: boolean }) => (
  <StatusButton $w={w} $on={on} aria-label={n}><Icon name={n} /></StatusButton>
);
const SC = ({ w = 20 }: { w?: number }) => (
  <StatusButton $w={w} aria-label="Options"><Caret size={8} /></StatusButton>
);

const StatusBar = () => (
  <StatusRow>
    <StatusGroup><StatusButton $w={60}>MODEL</StatusButton></StatusGroup>
    <StatusGroup><SB n="sGrid" w={33} /><SB n="sSnap" w={27} /><SC w={21} /></StatusGroup>
    <StatusGroup>
      <SB n="sOrtho" w={33} /><SB n="sPolar" w={28} on /><SC w={20} /><SB n="sIso" w={29} /><SC w={20} />
    </StatusGroup>
    <StatusGroup><SB n="sTrack" w={29} on /><SB n="sOsnap" w={29} on /><SC w={22} /></StatusGroup>
    <StatusGroup>
      <SB n="sAnno" w={30} on /><SB n="sAnno2" w={30} /><SB n="sAnno3" w={30} />
      <StatusButton $w={67}>1:1000<Caret size={8} /></StatusButton>
    </StatusGroup>
    <StatusGroup><SB n="gear" w={32} /><SC w={18} /></StatusGroup>
    <StatusGroup><SB n="sPlus" w={32} /></StatusGroup>
    <StatusGroup><SB n="sIsolate" w={34} /><StatusButton $w={32}>1.4</StatusButton></StatusGroup>
    <StatusGroup><SB n="sShapes" w={32} /></StatusGroup>
    <StatusGroup><SB n="sCad" w={36} /></StatusGroup>
    <StatusGroup><SB n="sFull" w={31} /><SB n="sMenu" w={30} /></StatusGroup>
  </StatusRow>
);

const Taskbar = styled.footer`
  display: flex;
  height: 50px;
  background: linear-gradient(90deg, #262626, #1f2022 40%, #0e1520 50%, #1d2023 58%, #14181d 85%, #0e131b);
`;
const SearchBox = styled.label`
  display: flex;
  align-items: center;
  gap: 12px;
  width: 430px;
  padding: 0 16px 0 12px;
  background: #f1f1f1;
`;
const Ring = styled.span`
  width: 26px;
  height: 26px;
  border: 3px solid #111;
  border-radius: 50%;
`;
const TaskSearch = styled.input`
  flex: 1;
  min-width: 0;
  border: 0;
  padding: 0;
  background: none;
  font-size: 17px;
  &::placeholder { color: #333; opacity: 1; }
`;
const TaskButton = styled.button<{ $run?: boolean; $on?: boolean }>`
  display: flex;
  align-items: center;
  justify-content: center;
  width: 62px;
  background: ${(p) => (p.$on ? "#484a50" : "transparent")};
  border-bottom: 3px solid transparent;
  border-bottom-color: ${(p) => (p.$run ? "#c9bfc0" : "transparent")};
  border-left: 5px solid transparent;
  border-right: 5px solid transparent;
`;
const Clock = styled.div`
  width: 96px;
  padding-top: 2px;
  line-height: 23px;
  text-align: center;
  color: #fff;
`;
const NoticeButton = styled.button`
  position: relative;
  width: 52px;
  padding: 12px 14px;
  margin-left: 10px;
  border-right: 1px solid #444;
`;
const Badge = styled.span`
  position: absolute;
  right: 14px;
  bottom: 3px;
  width: 20px;
  height: 20px;
  border: 1px solid #aaa;
  border-radius: 50%;
  background: #2a2c30;
  color: #fff;
  font-size: 12px;
  font-weight: 700;
  line-height: 18px;
  text-align: center;
`;

const APPS: [string, number, boolean, boolean][] = [
  ["taskview", 20, false, false], ["explorer", 28, false, false], ["mail", 30, false, false],
  ["chrome", 28, true, false], ["notepad", 28, true, false], ["autocad", 30, true, true], ["paint", 28, true, false],
];

export default function App() {
  return (
    <Page>
      <GlobalStyle />
      <TopHeader />
      <RibbonBar />
      <DocTabs>
        <DocTab $w={165}>Start</DocTab>
        <DocTab $w={174} $on>4.1*<Icon name="xDark" size={12} /></DocTab>
        <AddTab aria-label="New drawing">+</AddTab>
      </DocTabs>
      <Main>
        <ToolspacePalette />
        <Canvas>
          <ProfileDrawing />
          <ViewLabel>[−][Top][2D Wireframe]</ViewLabel>
          <MdiButtons>
            {["mMin", "mRest", "xBold"].map((n) => (
              <IconButton key={n} $w={24} aria-label={n}><Icon name={n} size={13} /></IconButton>
            ))}
          </MdiButtons>
          <NavBar><NavIcons /></NavBar>
          <ProfileLayoutTools />
          <CommandLine>
            <Grip />
            <IconButton $w={20} aria-label="Close command line"><Icon name="xThin" size={14} /></IconButton>
            <IconButton aria-label="Customize"><Icon name="wrench" size={18} /></IconButton>
            <CommandField>
              <Icon name="prompt" size={18} />
              <Caret size={8} color="#555" />
              <CommandInput aria-label="Command" placeholder="Type a command" />
              <Caret up size={9} color="#222" />
            </CommandField>
          </CommandLine>
        </Canvas>
        <DockTools />
      </Main>
      <LayoutTabs>
        <LayoutTab $w={72} $on>Model</LayoutTab>
        <LayoutTab $w={124}>FORMATO_A1</LayoutTab>
        <AddLayout aria-label="New layout">+</AddLayout>
      </LayoutTabs>
      <StatusBar />
      <Taskbar>
        <IconButton $w={60} aria-label="Start menu"><Icon name="win" /></IconButton>
        <SearchBox>
          <Ring />
          <TaskSearch aria-label="Search" placeholder="Digite aqui para pesquisar" />
          <Icon name="mic" />
        </SearchBox>
        {APPS.map(([n, s, run, on]) => (
          <TaskButton key={n} $run={run} $on={on} aria-label={n}><Icon name={n} size={s} /></TaskButton>
        ))}
        <Grow />
        <IconButton $w={44} aria-label="People"><Icon name="people" /></IconButton>
        <IconButton $w={44} aria-label="Show hidden icons"><Icon name="up" size={16} /></IconButton>
        {["cloud", "battery", "wifi", "volume"].map((n) => (
          <IconButton key={n} $w={30} aria-label={n}><Icon name={n} /></IconButton>
        ))}
        <Clock>21:34<br />04/02/2020</Clock>
        <NoticeButton aria-label="Notifications">
          <Icon name="notice" size={22} />
          <Badge>2</Badge>
        </NoticeButton>
      </Taskbar>
    </Page>
  );
}
